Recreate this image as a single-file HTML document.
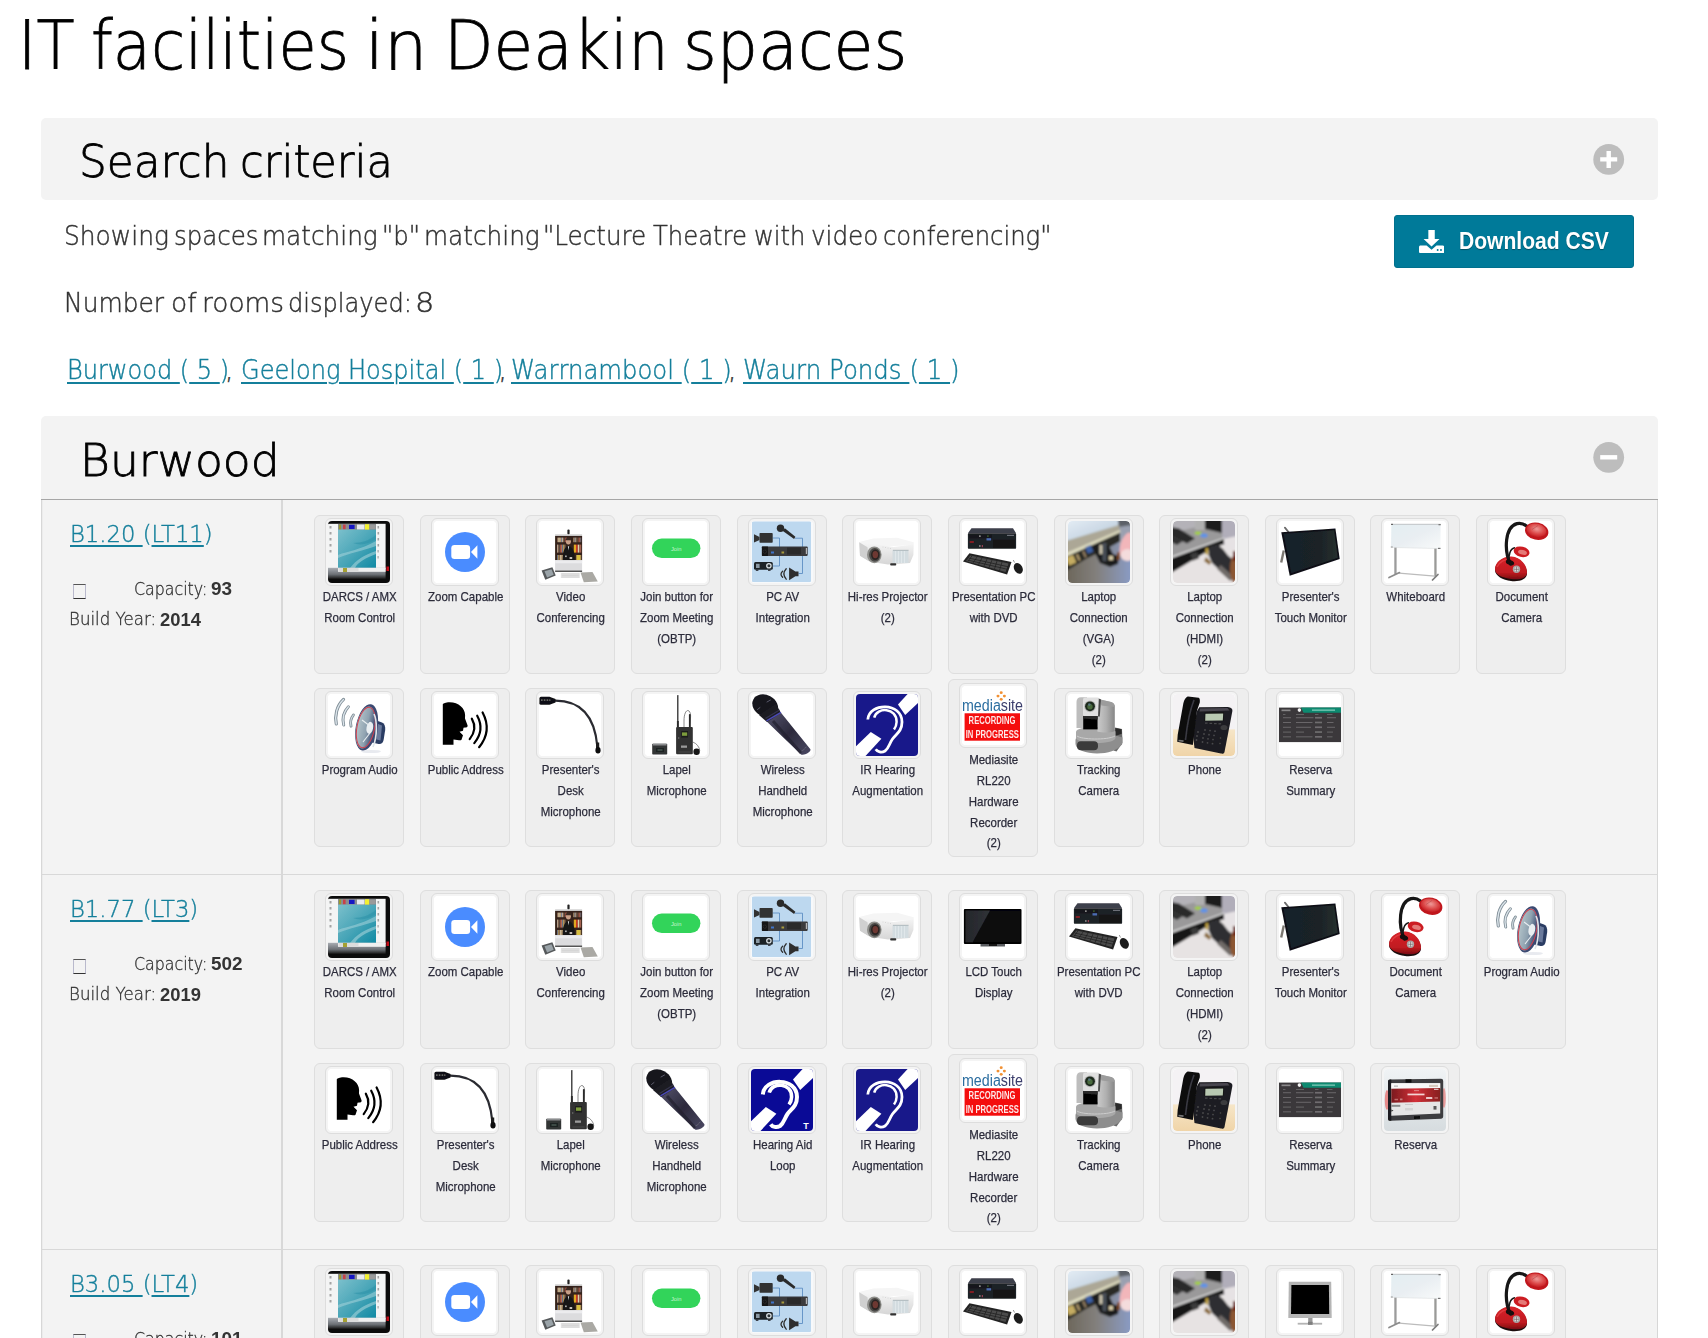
<!DOCTYPE html>
<html lang="en">
<head>
<meta charset="utf-8">
<title>IT facilities in Deakin spaces</title>
<style>
html,body{margin:0;padding:0;background:#fff}
body{width:1708px;height:1338px;overflow:hidden;font-family:"Liberation Sans",sans-serif;color:#333}
#wrap{position:relative;width:1708px;height:1338px;overflow:hidden;background:#fff}
.lt{font-family:"DejaVu Sans Light","DejaVu Sans","Liberation Sans",sans-serif;font-weight:200;
  white-space:nowrap;transform-origin:0 0;margin:0}
h1,h2,p{margin:0;font-weight:200}
a{color:#147f9b}
#title{position:absolute;color:#000;-webkit-text-stroke-color:#000}
.panel{position:absolute;left:41px;width:1617px;background:#f3f3f3;border-radius:5px}
#search{top:118px;height:82px}
#burwood{top:416px;height:940px;border-radius:5px 5px 0 0}
.panel h2{position:absolute;color:#000;-webkit-text-stroke-color:#000}
.tog{position:absolute;left:1552px;top:25px}
#info{position:absolute;left:0;top:200px;width:1708px;height:216px}
#info p{position:absolute;color:#333;-webkit-text-stroke-color:#333}
#p-links a{color:#147f9b;text-decoration:underline;text-decoration-thickness:1.6px;text-underline-offset:3px;-webkit-text-stroke-color:#147f9b}
.btn{position:absolute;left:1394px;top:15px;width:240px;height:53px;box-sizing:border-box;background:#007a99;
  border:1px solid #00708d;border-radius:3px;color:#fff;text-decoration:none;font-weight:bold;font-size:24px}
.btn svg{position:absolute;left:24px;top:13.6px;width:25.3px;height:23.4px}
#btn-t{position:absolute;left:63.5px;top:11.3px;line-height:28px;white-space:nowrap;transform-origin:0 0;transform:scaleX(.878);
  text-shadow:0 1px 1px rgba(0,0,0,.35)}
#rooms{position:absolute;left:0;top:83px;width:1617px;height:860px;border-top:1px solid #a6a6a6}
.room{position:absolute;left:0;width:1617px;height:375px;box-sizing:border-box;border-bottom:1px solid #d8d8d8;
  border-left:1px solid #d7d7d7;border-right:1px solid #d7d7d7;box-shadow:inset 1px 0 0 #ececec}
.meta{position:absolute;left:0;top:0;width:241px;height:374px;border-right:2px solid #d8d8d8;box-sizing:border-box}
.rname{position:absolute;display:block;color:#147f9b;-webkit-text-stroke-color:#147f9b;
  text-decoration:underline;text-decoration-thickness:2px;text-underline-offset:3px}
.tofu{position:absolute;left:31px;top:84px;width:11px;height:13px;border:1px solid #b9b9cc;border-top-color:#555;border-bottom-color:#333}
.capl,.yrl{position:absolute;color:#333;-webkit-text-stroke-color:#333}
.capv,.yrv{position:absolute;color:#333;font-weight:bold;white-space:nowrap;transform-origin:0 0;font-family:"Liberation Sans",sans-serif}
.tiles{position:absolute;left:0;top:0}
.tile{position:absolute;width:90px;box-sizing:border-box;background:#eee;border:1px solid #dedede;border-radius:6px}
.thumb{position:absolute;left:10px;top:2px;width:68px;height:68px;box-sizing:border-box;border:1px solid #ddd;
  border-radius:6px;background:#f4f4f4}
.ic{position:absolute;left:2px;top:2px;border-radius:4px;display:block;background:#fff}
.lab{position:absolute;left:-1px;top:70.8px;width:102.76px;transform:scaleX(.87);transform-origin:0 0;
  text-align:center;font-size:13.2px;line-height:20.9px;color:#2b2b3a;white-space:nowrap;-webkit-text-stroke:.25px #2b2b3a}
.tile.t5 .thumb{top:3px;height:65px}
.tile.t5 .ic{height:59px}
.tile.t5 .lab{top:69.8px}
.np{display:inline-block}
.w{position:absolute;top:0;white-space:nowrap;transform-origin:0 0;display:block}
.cm{color:#333;-webkit-text-stroke-color:#333}
#title{left:0;top:3.7px;font-size:67.8px;line-height:84px;-webkit-text-stroke-width:0.8px}
#h-search{left:0;top:15.78px;font-size:45px;line-height:56px;-webkit-text-stroke-width:0.8px}
#h-bur{left:0;top:17.2px;font-size:45px;line-height:56px;-webkit-text-stroke-width:0.8px}
#p-show{left:0;top:20px;font-size:26.47px;line-height:32px;-webkit-text-stroke-width:0.45px}
#p-num{left:0;top:87px;font-size:26.47px;line-height:32px;-webkit-text-stroke-width:0.45px}
#p-links{left:0;top:154px;font-size:26.47px;line-height:32px;-webkit-text-stroke-width:0.45px}
.rname{left:28.26px;top:18.48px;font-size:23.585px;line-height:32px;transform:scaleX(0.963);-webkit-text-stroke-width:0.4px}
.capl{left:92.28px;top:77.11px;font-size:16.779px;line-height:24px;transform:scaleX(0.944);-webkit-text-stroke-width:0.32px}
.capv{left:169.16px;top:76.87px;font-size:18.895px;line-height:24px;transform:scaleX(1.002);-webkit-text-stroke-width:0px}
.yrl{left:27.28px;top:107.15px;font-size:16.779px;line-height:24px;transform:scaleX(0.993);-webkit-text-stroke-width:0.32px}
.yrv{left:117.76px;top:108.11px;font-size:18.895px;line-height:24px;transform:scaleX(0.975);-webkit-text-stroke-width:0px}

</style>
</head>
<body>
<div id="wrap">
<svg width="0" height="0" style="position:absolute" aria-hidden="true"><defs>
<linearGradient id="g-teal" x1="0" y1="0" x2="1" y2="1"><stop offset="0" stop-color="#7cc0cc"/><stop offset=".5" stop-color="#4aa6b8"/><stop offset="1" stop-color="#0f8aa4"/></linearGradient>
<linearGradient id="g-dbar" x1="0" y1="0" x2="0" y2="1"><stop offset="0" stop-color="#a9adb3"/><stop offset=".6" stop-color="#6c7075"/><stop offset="1" stop-color="#1a1a1a"/></linearGradient>
<linearGradient id="g-sky" x1="0" y1="0" x2="1" y2="1"><stop offset="0" stop-color="#e6eef6"/><stop offset="1" stop-color="#b4c6d6"/></linearGradient>
<linearGradient id="g-table" x1="0" y1="0" x2="1" y2="0"><stop offset="0" stop-color="#6c665a"/><stop offset=".45" stop-color="#827f7c"/><stop offset="1" stop-color="#8a9cc6"/></linearGradient>
<linearGradient id="g-touch" x1="0" y1="0" x2="1" y2="0"><stop offset="0" stop-color="#18202c"/><stop offset=".6" stop-color="#1a2026"/><stop offset="1" stop-color="#26302e"/></linearGradient>
<linearGradient id="g-wb" x1="0" y1="0" x2="1" y2="1"><stop offset="0" stop-color="#e3eef2"/><stop offset=".5" stop-color="#e9eef2"/><stop offset="1" stop-color="#f8fafa"/></linearGradient>
<linearGradient id="g-red" x1="0" y1="0" x2="0" y2="1"><stop offset="0" stop-color="#d8242a"/><stop offset=".7" stop-color="#c01a20"/><stop offset="1" stop-color="#7a0c10"/></linearGradient>
<radialGradient id="g-redhead" cx=".5" cy=".4" r=".6"><stop offset="0" stop-color="#ee9a98"/><stop offset=".6" stop-color="#dc4a4a"/><stop offset="1" stop-color="#c41c22"/></radialGradient>
<linearGradient id="g-cone" x1="0" y1="0" x2="1" y2="0"><stop offset="0" stop-color="#b4c4ca"/><stop offset=".55" stop-color="#8fa2b0"/><stop offset="1" stop-color="#3a4a72"/></linearGradient>
<linearGradient id="g-wave" x1="0" y1="0" x2="1" y2="0"><stop offset="0" stop-color="#8c9aa2"/><stop offset=".5" stop-color="#dfe8ee"/><stop offset="1" stop-color="#7e8c94"/></linearGradient>
<linearGradient id="g-mic" x1="0" y1="0" x2="1" y2="1"><stop offset="0" stop-color="#54526c"/><stop offset=".5" stop-color="#2c2a3c"/><stop offset="1" stop-color="#4a4862"/></linearGradient>
<linearGradient id="g-proj" x1="0" y1="0" x2="0" y2="1"><stop offset="0" stop-color="#f6f6f6"/><stop offset="1" stop-color="#d6d6d6"/></linearGradient>
<linearGradient id="g-ptz" x1="0" y1="0" x2="1" y2="0"><stop offset="0" stop-color="#cacaca"/><stop offset=".5" stop-color="#b0b0b0"/><stop offset="1" stop-color="#868686"/></linearGradient>
<linearGradient id="g-resred" x1="0" y1="0" x2="1" y2="0"><stop offset="0" stop-color="#7a1a1e"/><stop offset=".5" stop-color="#d23038"/><stop offset="1" stop-color="#86201f"/></linearGradient>
<linearGradient id="g-resbg" x1="0" y1="0" x2="0" y2="1"><stop offset="0" stop-color="#f0f3f5"/><stop offset="1" stop-color="#d6dcdf"/></linearGradient>
<linearGradient id="g-tv" x1="0" y1="0" x2="1" y2="0"><stop offset="0" stop-color="#25272b"/><stop offset="1" stop-color="#303237"/></linearGradient>
<linearGradient id="g-desk" x1="0" y1="0" x2="0" y2="1"><stop offset="0" stop-color="#f6e6c8"/><stop offset="1" stop-color="#efd2a4"/></linearGradient>
<filter id="f-b1" x="-5%" y="-5%" width="110%" height="110%"><feGaussianBlur stdDeviation=".6"/></filter>
<filter id="f-b2" x="-5%" y="-5%" width="110%" height="110%"><feGaussianBlur stdDeviation=".9"/></filter>
<filter id="f-b0" x="-5%" y="-5%" width="110%" height="110%"><feGaussianBlur stdDeviation=".3"/></filter>
<clipPath id="c62"><rect width="62" height="62" rx="4"/></clipPath>
</defs></svg>
<h1 class="lt" id="title"><span class="w" style="left:17.594px;transform:scaleX(0.92)">IT</span> <span class="w" style="left:91.142px;transform:scaleX(0.916)">facilities</span> <span class="w" style="left:365.118px;transform:scaleX(1.011)">in</span> <span class="w" style="left:444.14px;transform:scaleX(0.95)">Deakin</span> <span class="w" style="left:683.367px;transform:scaleX(0.958)">spaces</span></h1>

<div class="panel" id="search">
  <h2 class="lt" id="h-search"><span class="w" style="left:37.876px;transform:scaleX(0.973)">Search</span> <span class="w" style="left:198.989px;transform:scaleX(0.958)">criteria</span></h2>
  <svg class="tog" viewBox="0 0 32 32" width="32" height="32"><g transform="translate(-.3 .4)"><circle cx="16" cy="16" r="15.4" fill="#bdbdbd"/><path d="M7.5 13.8h6.3V7.5h4.4v6.3h6.3v4.4h-6.3v6.3h-4.4v-6.3H7.5z" fill="#fff"/></g></svg>
</div>

<div id="info">
  <p class="lt" id="p-show"><span class="w" style="left:64.266px;transform:scaleX(0.941)">Showing</span> <span class="w" style="left:174.118px;transform:scaleX(0.925)">spaces</span> <span class="w" style="left:262.447px;transform:scaleX(0.935)">matching</span> <span class="w" style="left:382.119px;transform:scaleX(0.923)">&quot;b&quot;</span> <span class="w" style="left:423.847px;transform:scaleX(0.935)">matching</span> <span class="w" style="left:543.357px;transform:scaleX(0.93)">&quot;Lecture</span> <span class="w" style="left:653.494px;transform:scaleX(0.917)">Theatre</span> <span class="w" style="left:753.635px;transform:scaleX(0.915)">with</span> <span class="w" style="left:810.64px;transform:scaleX(0.931)">video</span> <span class="w" style="left:883.066px;transform:scaleX(0.919)">conferencing&quot;</span></p>
  <a class="btn" href="#"><svg viewBox="0 0 26 24" width="26" height="24"><path d="M9.6 0h6.6v9.2h4.9L12.9 17 4.7 9.2h4.9z" fill="#fff"/><path d="M1.6 15.8h6.2l5.1 4.6 5.1-4.6h6.4c.9 0 1.6.7 1.6 1.6v4.9c0 .9-.7 1.6-1.6 1.6H1.6C.7 23.9 0 23.2 0 22.3v-4.9c0-.9.7-1.6 1.6-1.6z" fill="#fff"/><circle cx="19.2" cy="20.6" r="1" fill="#007a99"/><circle cx="22.6" cy="20.6" r="1" fill="#007a99"/></svg><span id="btn-t">Download CSV</span></a>
  <p class="lt" id="p-num"><span class="w" style="left:64.464px;transform:scaleX(0.941)">Number</span> <span class="w" style="left:171.45px;transform:scaleX(1.001)">of</span> <span class="w" style="left:201.59px;transform:scaleX(0.997)">rooms</span> <span class="w" style="left:288.374px;transform:scaleX(0.911)">displayed:</span> <span class="w" style="left:415.354px;transform:scaleX(1.147)">8</span></p>
  <p class="lt" id="p-links"><a class="w" href="#" style="left:66.76px;transform:scaleX(0.908)">Burwood <span class="np">(</span> 5 <span class="np">)</span></a> <span class="w cm" style="left:225px">,</span> <a class="w" href="#" style="left:240.704px;transform:scaleX(0.909)">Geelong Hospital <span class="np">(</span> 1 <span class="np">)</span></a> <span class="w cm" style="left:498.4px">,</span> <a class="w" href="#" style="left:511.45px;transform:scaleX(0.919)">Warrnambool <span class="np">(</span> 1 <span class="np">)</span></a> <span class="w cm" style="left:728.1px">,</span> <a class="w" href="#" style="left:743.184px;transform:scaleX(0.924)">Waurn Ponds <span class="np">(</span> 1 <span class="np">)</span></a></p>
</div>

<div class="panel" id="burwood">
  <h2 class="lt" id="h-bur"><span class="w" style="left:38.577px;transform:scaleX(1.014)">Burwood</span></h2>
  <svg class="tog" viewBox="0 0 32 32" width="32" height="32"><g transform="translate(-.3 .3)"><circle cx="16" cy="16" r="15.4" fill="#bdbdbd"/><path d="M7.500 13.800h17v4.400h-17z" fill="#fff"/></g></svg>
  <div id="rooms">
<div class="room" style="top:0px">
<div class="meta"><a class="rname lt" href="#">B1.20 <span class="np">(</span>LT11<span class="np">)</span></a><span class="tofu"></span><span class="capl lt">Capacity:</span><b class="capv">93</b><span class="yrl lt">Build Year:</span><b class="yrv">2014</b></div>
<div class="tiles">
<div class="tile" style="left:272px;top:15px;height:159px"><div class="thumb"><svg class="ic" viewBox="0 0 62 62" width="62" height="62" preserveAspectRatio="none"><rect width="62" height="62" fill="#0b0b0b"/><g filter="url(#f-b0)"><rect x="0" y="2.8" width="57.6" height="45" fill="#f3f4f4"/><rect x="10" y="3" width="38" height="6" fill="#8b8d8f"/><rect x="10" y="8.6" width="38" height="38.6" fill="url(#g-teal)"/><path d="M10 34c10-4 22-5 38-14v5C34 30 22 32 10 37z" fill="#a6d3da" opacity=".55"/><path d="M22 47c6-8 14-13 26-17v3C38 37 30 41 27 47z" fill="#b9dde2" opacity=".5"/><path d="M25 22c8 3 16 1 23-4v-4c-6 5-14 8-23 8z" fill="#2f93a8" opacity=".6"/><rect x="11" y="3.6" width="2" height="4.6" fill="#9a9a2a"/><rect x="15" y="3.6" width="2.6" height="4.6" fill="#c8404a"/><rect x="21" y="3.8" width="5.6" height="4.2" fill="#1818c4"/><rect x="29" y="3.6" width="7.5" height="4.8" fill="#e8eaf0"/><rect x="37" y="3.2" width="4.2" height="5.4" fill="#f2f030"/><rect x="42" y="4" width="5.5" height="4" fill="#9a9a9a"/><g fill="#a4a4a4"><rect x="1.5" y="5" width="2" height="2.5"/><rect x="1.5" y="11" width="2" height="2.5"/><rect x="1.5" y="17" width="2" height="2.5"/><rect x="1.5" y="23" width="2" height="2.5"/><rect x="1.5" y="29" width="2" height="2.5"/><rect x="49.5" y="5" width="1.6" height="2.5"/><rect x="49.5" y="11" width="1.6" height="2.5"/><rect x="49.5" y="17" width="1.6" height="2.5"/><rect x="49.5" y="23" width="1.6" height="2.5"/><rect x="49.5" y="29" width="1.2" height="2.5"/><rect x="49.5" y="35" width="1.2" height="2.5"/></g><rect x="0" y="46.8" width="57.6" height="11" fill="url(#g-dbar)"/><rect x="10" y="46.8" width="47.6" height="4" fill="#f0f0f0"/><rect x="10.5" y="47" width="20" height="3.8" fill="#dcdcdc"/><rect x="15" y="47" width="4" height="4" fill="#a4a030"/><rect x="58.4" y="45.5" width="2.6" height="4.5" fill="#c00a14"/></g></svg></div><div class="lab" style="left:-0.02px">DARCS / AMX<br>Room Control</div></div>
<div class="tile" style="left:378px;top:15px;height:159px"><div class="thumb"><svg class="ic" viewBox="0 0 62 62" width="62" height="62" preserveAspectRatio="none"><rect width="62" height="62" fill="#fff"/><circle cx="31" cy="31" r="20" fill="#4a8cff"/><rect x="17.3" y="24" width="18.8" height="14" rx="3.2" fill="#fff"/><path d="M37 31l6.4-6.8v13.6z" fill="#fff"/></svg></div><div class="lab" style="left:-0.38px">Zoom Capable</div></div>
<div class="tile" style="left:483px;top:15px;height:159px"><div class="thumb"><svg class="ic" viewBox="0 0 62 62" width="62" height="62" preserveAspectRatio="none"><rect width="62" height="62" fill="#fff"/><g filter="url(#f-b1)" transform="translate(.8 0)"><rect x="27.6" y="8.6" width="2.2" height="5" rx="1" fill="#222"/><rect x="15.3" y="13.4" width="27" height="2" fill="#c9c9c9"/><rect x="15.3" y="15" width="27" height="24.3" fill="#34221a"/><rect x="17.2" y="16.6" width="1.2" height="4.6" fill="#8a6a50"/><rect x="18.4" y="16.6" width="0.9" height="4.6" fill="#d8c8a8"/><rect x="19.3" y="16.6" width="0.9" height="4.6" fill="#d0b890"/><rect x="20.2" y="16.6" width="1.2" height="4.6" fill="#b89a70"/><rect x="21.4" y="16.6" width="0.9" height="4.6" fill="#8890a8"/><rect x="22.3" y="16.6" width="0.9" height="4.6" fill="#c8b8a0"/><rect x="23.2" y="16.6" width="1.2" height="4.6" fill="#7a5a48"/><rect x="24.4" y="16.6" width="0.9" height="4.6" fill="#5a4a40"/><rect x="25.3" y="16.6" width="0.9" height="4.6" fill="#a05040"/><rect x="26.2" y="16.6" width="0.8" height="4.6" fill="#b06a58"/><rect x="33.5" y="16.6" width="1.2" height="4.6" fill="#b89a70"/><rect x="34.7" y="16.6" width="0.9" height="4.6" fill="#8890a8"/><rect x="35.6" y="16.6" width="0.9" height="4.6" fill="#c8b8a0"/><rect x="36.5" y="16.6" width="1.2" height="4.6" fill="#7a5a48"/><rect x="37.7" y="16.6" width="0.9" height="4.6" fill="#5a4a40"/><rect x="38.6" y="16.6" width="0.9" height="4.6" fill="#a05040"/><rect x="39.5" y="16.6" width="1.2" height="4.6" fill="#b06a58"/><rect x="40.7" y="16.6" width="0.7" height="4.6" fill="#6a7890"/><rect x="17.2" y="23.6" width="0.9" height="8" fill="#c8b8a0"/><rect x="18.1" y="23.6" width="1.2" height="8" fill="#7a5a48"/><rect x="19.3" y="23.6" width="0.9" height="8" fill="#5a4a40"/><rect x="20.2" y="23.6" width="0.9" height="8" fill="#a05040"/><rect x="21.1" y="23.6" width="1.2" height="8" fill="#b06a58"/><rect x="22.3" y="23.6" width="0.9" height="8" fill="#6a7890"/><rect x="23.2" y="23.6" width="0.9" height="8" fill="#c0a860"/><rect x="24.1" y="23.6" width="1.2" height="8" fill="#8a6a50"/><rect x="25.3" y="23.6" width="0.2" height="8" fill="#d8c8a8"/><rect x="39.4" y="23.6" width="0.9" height="8" fill="#a05040"/><rect x="40.3" y="23.6" width="1.1" height="8" fill="#b06a58"/><rect x="17.2" y="34" width="0.9" height="5.2" fill="#6a7890"/><rect x="18.1" y="34" width="0.9" height="5.2" fill="#c0a860"/><rect x="19.0" y="34" width="1.2" height="5.2" fill="#8a6a50"/><rect x="20.2" y="34" width="0.9" height="5.2" fill="#d8c8a8"/><rect x="21.1" y="34" width="0.9" height="5.2" fill="#d0b890"/><rect x="22.0" y="34" width="1.2" height="5.2" fill="#b89a70"/><rect x="23.2" y="34" width="0.8" height="5.2" fill="#8890a8"/><rect x="36.5" y="34" width="0.9" height="5.2" fill="#c0a860"/><rect x="37.4" y="34" width="1.2" height="5.2" fill="#8a6a50"/><rect x="38.6" y="34" width="0.9" height="5.2" fill="#d8c8a8"/><rect x="39.5" y="34" width="0.9" height="5.2" fill="#d0b890"/><rect x="40.4" y="34" width="1.0" height="5.2" fill="#b89a70"/><rect x="34" y="23.6" width="2.2" height="8" fill="#e0a820"/><rect x="36.200" y="23.600" width="1.800" height="8" fill="#c83820"/><rect x="38" y="23.600" width="1.400" height="8" fill="#d8d0b0"/><rect x="37" y="34" width="3.500" height="5.200" fill="#d8c040"/><ellipse cx="28.6" cy="20.3" rx="2.5" ry="3.2" fill="#c8a088"/><path d="M26 18.200c.800-2.400 4.400-2.400 5.200 0l-.2 1h-4.800z" fill="#3a2a20"/><path d="M22.800 39.300c0-9 2-13.500 5.800-14.500 4 1 6.400 5.500 6.400 14.500z" fill="#171717"/><path d="M28 25.200l.700 4 .700-4z" fill="#ddd"/><rect x="29.800" y="36" width="2.600" height="2" fill="#c8c0b8"/><rect x="25.300" y="34.500" width="1.600" height="1.600" fill="#bbb"/><rect x="15.3" y="39.3" width="27" height="10.4" fill="#dcdcde"/><rect x="15.3" y="39.3" width="27" height="3" fill="#ececee"/><rect x="15.3" y="49.5" width="27" height="1.5" fill="#555"/><rect x="21" y="52" width="19" height="5" fill="#e3e3e3"/><path d="M22 53h17M22 54.500h17M22 56h17" stroke="#c8c8c8" stroke-width=".5"/><path d="M1.800 49.500l10.800-3.300 3.300 8.400-10.400 4.100z" fill="#55585a"/><path d="M4.700 50.200l7-2 2.200 5.600-6.600 2.600z" fill="#9aa3a8"/><path d="M40.700 51.500l12-.4 5.300 9.500-14 .6z" fill="#aaa9a4"/></g></svg></div><div class="lab" style="left:0.26px">Video<br>Conferencing</div></div>
<div class="tile" style="left:589px;top:15px;height:159px"><div class="thumb"><svg class="ic" viewBox="0 0 62 62" width="62" height="62" preserveAspectRatio="none"><rect width="62" height="62" fill="#fff"/><rect x="7" y="17.6" width="48.4" height="19.4" rx="9.7" fill="#32d45a"/><text x="31.200" y="29.500" font-family="Liberation Sans,sans-serif" font-size="5.8" text-anchor="middle" fill="#c4f4d0">Join</text></svg></div><div class="lab" style="left:-0.1px">Join button for<br>Zoom Meeting<br>(OBTP)</div></div>
<div class="tile" style="left:695px;top:15px;height:159px"><div class="thumb"><svg class="ic" viewBox="0 0 62 62" width="62" height="62" preserveAspectRatio="none"><rect width="62" height="62" fill="#f7f9fb"/><rect x="1" y=".5" width="59" height="60.500" rx="1" fill="#bdd8ef"/><g filter="url(#f-b0)"><path d="M21.700 17h6.800v28h-6.700M44 17.200h7.500v35.300h-4" fill="none" stroke="#5e8fc4" stroke-width=".9"/><rect x="8.5" y="12" width="13.200" height="9.700" rx=".8" fill="#303030"/><path d="M3 13.300l5.500 2.700v3l-5.500 2.600z" fill="#303030"/><circle cx="29.500" cy="7.300" r="3.700" fill="#2c2c2c"/><path d="M31.500 9.800l2.400-2.600 10.500 8.600-1.300 2.200z" fill="#2c2c2c"/><rect x="10.900" y="25.500" width="45.800" height="9.400" rx=".8" fill="#3a3a3e"/><rect x="10.900" y="25.500" width="6" height="9.400" fill="#121214"/><rect x="36" y="26.500" width="14" height="7" fill="#2a2a2c"/><rect x="54.800" y="27" width="1.200" height="6" fill="#b8b8b8"/><rect x="20" y="30.500" width="3" height="2" fill="#3f74c8"/><rect x="30.500" y="30.500" width="2.600" height="2" fill="#a89a3c"/><circle cx="13.800" cy="30.600" r="1.700" fill="none" stroke="#444" stroke-width=".5"/><rect x="3" y="41" width="18.800" height="7.700" rx="1.500" fill="#1e2428"/><rect x="4.800" y="48.500" width="2.600" height="1.300" fill="#1e2428"/><rect x="17" y="48.500" width="2.600" height="1.300" fill="#1e2428"/><circle cx="17.900" cy="44.800" r="2.800" fill="#d9dfe3"/><circle cx="17.900" cy="44.800" r="1.500" fill="#2a3036"/><rect x="5" y="42.800" width="3.600" height="4.200" fill="#8a99a4"/><path d="M38.100 46.600v12.600l6.300-4h3.100v-4.600h-3.100z" fill="#2e2e2e"/><path d="M35.200 47.800q-4.600 5 0 10.400M31.600 50.200q-3.200 3 0 6" fill="none" stroke="#2e2e2e" stroke-width="1.300" stroke-linecap="round"/></g></svg></div><div class="lab" style="left:-0.46px">PC AV<br>Integration</div></div>
<div class="tile" style="left:800px;top:15px;height:159px"><div class="thumb"><svg class="ic" viewBox="0 0 62 62" width="62" height="62" preserveAspectRatio="none"><rect width="62" height="62" fill="#fff"/><g filter="url(#f-b1)"><path d="M3.200 21l14-3.500 24-.8 16.500 4.500v3l-54 2z" fill="#f5f5f5"/><path d="M3.200 21.200l.8 13.500 10 6 18 2.800 22-1.500 3.400-8 .3-10.400-20 2.400z" fill="url(#g-proj)"/><path d="M3.200 21.200l.8 13.500 9 5.500-1.500-14z" fill="#d0d0d0"/><rect x="36.500" y="29" width="16" height="13" fill="#d3dce0"/><path d="M37 29.300h15.500" stroke="#8a949a" stroke-width=".5"/><g stroke="#e9eef0" stroke-width=".6"><path d="M39.500 30v12M42.500 30v12M45.500 30v12M48.500 30v12"/></g><ellipse cx="18.300" cy="33.800" rx="7.300" ry="8.400" fill="#8e8e8a"/><ellipse cx="18.800" cy="33.800" rx="5.700" ry="6.900" fill="#4a4846"/><ellipse cx="19.200" cy="33.700" rx="4.200" ry="5.200" fill="#2a2422"/><ellipse cx="19.300" cy="33.600" rx="2.800" ry="3.600" fill="#6e3832"/><rect x="34.200" y="42.200" width="6" height="2.300" rx=".8" fill="#333"/><g fill="#bbb"><circle cx="27" cy="26" r=".4"/><circle cx="29.500" cy="26.500" r=".4"/><circle cx="32" cy="27" r=".4"/><circle cx="34.300" cy="27.500" r=".4"/></g></g></svg></div><div class="lab" style="left:0.18px">Hi-res Projector<br>(2)</div></div>
<div class="tile" style="left:906px;top:15px;height:159px"><div class="thumb"><svg class="ic" viewBox="0 0 62 62" width="62" height="62" preserveAspectRatio="none"><rect width="62" height="62" fill="#fff"/><g filter="url(#f-b0)"><path d="M9.500 7.300h41.500l3.100 5h-48.200z" fill="#3c3f4b"/><rect x="5.900" y="12.300" width="48.200" height="15.400" rx=".6" fill="#1d2025"/><rect x="7" y="13.500" width="23" height="3.600" fill="#15171a"/><rect x="31" y="18.800" width="22" height="8" fill="#121316"/><rect x="24.500" y="17.200" width="4.600" height="2.300" fill="#4c6cb4"/><rect x="7.500" y="20.200" width="4.600" height="1.600" rx=".8" fill="#a01e22"/><rect x="45" y="13.800" width="7" height="1.200" fill="#6c6f78"/><rect x="17" y="14.300" width="1.700" height="1.700" fill="#8a8a8a"/><rect x="25.300" y="14.500" width="1.200" height="1.200" fill="#5a8a3a"/><rect x="17" y="24" width="1.600" height="2" fill="#777"/><rect x="19.800" y="24" width="1" height="2.200" fill="#b04a5a"/><path d="M1 40.500l6.400-8.300 42.100 8.700-4.400 12.700z" fill="#242424"/><path d="M4 40l4.500-5.600 38 8-3 8.500z" fill="#4c4c4c"/><g stroke="#1c1c1c" stroke-width=".7"><path d="M6.500 37l39.500 8.700M5.300 39l39.600 9.200M10 34.800l-4 5.500M15 36l-4 6M20 37l-3.500 6.500M25 38l-3 7M30 39l-3 7.600M35 40l-2.500 8M40 41l-2.500 8.600"/></g><ellipse cx="56.300" cy="47.400" rx="4.200" ry="5.700" transform="rotate(-28 56.300 47.400)" fill="#1c1c1c"/><path d="M52.500 41.500l-1.200-2.500" stroke="#333" stroke-width=".5"/></g></svg></div><div class="lab" style="left:-0.18px">Presentation PC<br>with DVD</div></div>
<div class="tile" style="left:1012px;top:15px;height:159px"><div class="thumb"><svg class="ic" viewBox="0 0 62 62" width="62" height="62" preserveAspectRatio="none"><g clip-path="url(#c62)"><g filter="url(#f-b2)"><rect x="-2" y="-2" width="66" height="66" fill="url(#g-table)"/><path d="M-2 -2h52l2 8L-2 21z" fill="url(#g-sky)"/><path d="M50 -2h14v24l-8 8-6-8z" fill="#9aa0b0"/><path d="M50 -2h14v6l-13 2z" fill="#5c6068"/><path d="M-2 20L51 4l1 6L-2 33z" fill="#aca796"/><path d="M-2 32L52 9l.5 2.500L-2 36z" fill="#dedcc0"/><path d="M-2 36L52 11.500v9L36 29 18 38-2 50z" fill="#2c2c26"/><rect x="18" y="25" width="6" height="7" transform="rotate(-24 21 28)" fill="#3b5fa4"/><rect x="-1" y="35" width="8" height="8.500" transform="rotate(-24 3 39)" fill="#c4ac62"/><rect x="9" y="33" width="2" height="7" transform="rotate(-24 10 36)" fill="#b8a070"/><rect x="15.500" y="30" width="1.600" height="7" transform="rotate(-24 16 33)" fill="#a89070"/><path d="M24 26l9-5 8 4 4 8 6 2-1 8-8 3-10-4z" fill="#1c1c1e"/><rect x="31.500" y="24" width="3" height="9" fill="#d8d0b8"/><rect x="34.500" y="22" width="4" height="18" fill="#4a5058"/><rect x="41" y="35" width="4" height="4" fill="#d8cca8"/><rect x="49" y="31" width="3" height="8" fill="#7a4828"/><ellipse cx="58.500" cy="24" rx="6" ry="13" transform="rotate(18 58.500 24)" fill="#f2b6ba"/><ellipse cx="59.500" cy="34" rx="7" ry="6" fill="#f4dcdc"/></g></g></svg></div><div class="lab" style="left:-0.54px">Laptop<br>Connection<br>(VGA)<br>(2)</div></div>
<div class="tile" style="left:1117px;top:15px;height:159px"><div class="thumb"><svg class="ic" viewBox="0 0 62 62" width="62" height="62" preserveAspectRatio="none"><g clip-path="url(#c62)"><g filter="url(#f-b2)"><rect x="-2" y="-2" width="66" height="66" fill="#e7e3e3"/><path d="M-2 -2h66v20L40 27 -2 50z" fill="#9a999a"/><path d="M-2 -2h26v8L-2 12z" fill="#b4b2b8"/><path d="M48 -2h16v20l-14 6z" fill="#b1aeba"/><path d="M50 18l14-3v12l-10 3z" fill="#e6e2e4"/><rect x="22" y="-2" width="9.500" height="11" fill="#b0b0b0"/><path d="M32 -2h17v14l-17-4z" fill="#1e1e1c"/><path d="M-2 6l8 1.500 16 10-8 5-16-8z" fill="#2c2c2c"/><path d="M-2 14l12 6-6 4-6-3z" fill="#333"/><ellipse cx="25" cy="12" rx="3.400" ry="1.600" fill="#a4d634"/><ellipse cx="31" cy="14.400" rx="3.600" ry="2" fill="#5b92ea"/><path d="M-2 35.500L51 16.500v1.800L-2 37.500z" fill="#dcdcdc"/><path d="M-2 37.500L51 18v5L40 27 -2 52z" fill="#171717"/><rect x="18" y="32" width="7" height="7" transform="rotate(-22 21 35)" fill="#3a3a3a"/><rect x="32.500" y="27" width="2.600" height="6.500" fill="#c4a43c"/><path d="M36 25.500l8-2.500 6 5 5 6.500 6 5 2 9-7 6-8-4-9-8.500-3.500-8z" fill="#2e2e30"/><path d="M46 46l13 12" stroke="#6f6b68" stroke-width="5.500"/><path d="M33 36l5 5-1.500 3-5.500-4z" fill="#8a6a38"/><ellipse cx="62" cy="48" rx="5" ry="14" fill="#8c5630"/><rect x="60" y="30" width="3" height="10" fill="#6a1410"/></g></g></svg></div><div class="lab" style="left:0.1px">Laptop<br>Connection<br>(HDMI)<br>(2)</div></div>
<div class="tile" style="left:1223px;top:15px;height:159px"><div class="thumb"><svg class="ic" viewBox="0 0 62 62" width="62" height="62" preserveAspectRatio="none"><rect width="62" height="62" fill="#fff"/><g filter="url(#f-b0)"><path d="M5.900 6.600l3.600 4.400" stroke="#6a6a6a" stroke-width="1.800" stroke-linecap="round"/><path d="M4.800 29.500L2.200 41.500" stroke="#7c7872" stroke-width="2.400"/><path d="M2.300 11.200l54.100-3.800 4.300 30.700-50 16.700z" fill="#0c0e14"/><path d="M4.500 12.800l50.600-3.500 3.700 27.500-46.500 15.500z" fill="url(#g-touch)"/></g></svg></div><div class="lab" style="left:-0.26px">Presenter&#39;s<br>Touch Monitor</div></div>
<div class="tile" style="left:1328px;top:15px;height:159px"><div class="thumb"><svg class="ic" viewBox="0 0 62 62" width="62" height="62" preserveAspectRatio="none"><rect width="62" height="62" fill="#fff"/><g filter="url(#f-b0)"><rect x="10.300" y="26" width="2.300" height="27" fill="#9c9c9c"/><rect x="50.300" y="27" width="2.300" height="28.500" fill="#9a9a98"/><path d="M15 52.200l36 3" stroke="#bcbcbc" stroke-width="1.200"/><path d="M5 56.600l10.500-5" stroke="#8c8c8c" stroke-width="1.700" stroke-linecap="round"/><path d="M48.500 59l5.500-5.500" stroke="#7c7c7c" stroke-width="1.700" stroke-linecap="round"/><path d="M7.400 3.200h49.200l-.2 24.200-49.400-1.200z" fill="url(#g-wb)"/><path d="M7.400 3.300h49.200" stroke="#b4b8ba" stroke-width=".8"/><path d="M7 26.400l49.400 1.200" stroke="#d8dcde" stroke-width=".6"/><rect x="7" y="2.800" width="2" height="1.200" fill="#666"/><rect x="54.500" y="3" width="2.200" height="1.300" fill="#777"/><rect x="54" y="26.800" width="2.500" height="1.200" fill="#777"/><rect x="6.800" y="25.500" width="2" height="1" fill="#999"/></g></svg></div><div class="lab" style="left:0.38px">Whiteboard</div></div>
<div class="tile" style="left:1434px;top:15px;height:159px"><div class="thumb"><svg class="ic" viewBox="0 0 62 62" width="62" height="62" preserveAspectRatio="none"><rect width="62" height="62" fill="#fff"/><g filter="url(#f-b0)"><path d="M5 49c0-7 8-13.500 16.500-13 9 .5 15.500 9 15.500 16.500 0 6-8 8.500-16 7.500S5 55 5 49z" fill="#1a0a0a"/><path d="M5 48c0-7 8-13 16.500-12.500 9 .5 15.500 8.500 15.500 16 0 6-8 7.500-16 6.500S5 54 5 48z" fill="url(#g-red)"/><path d="M7 46c2-5 8-8 13-8" stroke="#e8484c" stroke-width="1.200" fill="none" opacity=".7"/><path d="M20.500 43C14 30 14.500 6 27 2.600c4-1 7 .4 9.500 2.400" fill="none" stroke="#141414" stroke-width="3.200" stroke-linecap="round"/><path d="M19 40c-.5-6 1-12.500 6-13.200" fill="none" stroke="#141414" stroke-width="1.500"/><ellipse cx="20" cy="41.500" rx="4.300" ry="2.500" transform="rotate(20 20 41.500)" fill="#120808"/><ellipse cx="46.700" cy="10.200" rx="11.800" ry="8.600" transform="rotate(12 46.700 10.200)" fill="#c0181e"/><ellipse cx="46.500" cy="9.300" rx="10" ry="6.600" transform="rotate(12 46.500 9.300)" fill="url(#g-redhead)"/><path d="M42 8.500l6-4" stroke="#a04040" stroke-width=".4"/><ellipse cx="31.600" cy="30.800" rx="8" ry="5.200" transform="rotate(14 31.600 30.800)" fill="#cc1c22"/><ellipse cx="32.500" cy="31.300" rx="4.500" ry="2.300" transform="rotate(14 32.500 31.300)" fill="#e47a78"/><circle cx="26.500" cy="48.300" r="3.700" fill="#a9a4a4"/><circle cx="26.500" cy="48.300" r="2.200" fill="#d8d4d4"/><path d="M24 48.300h5M26.500 45.800v5" stroke="#6a5a5a" stroke-width=".6"/></g></svg></div><div class="lab" style="left:0.02px">Document<br>Camera</div></div>
<div class="tile" style="left:272px;top:188px;height:159px"><div class="thumb"><svg class="ic" viewBox="0 0 62 62" width="62" height="62" preserveAspectRatio="none"><rect width="62" height="62" fill="#fff"/><g filter="url(#f-b0)"><path d="M47 26l7 2.500c2.500 1 3.500 4 3.200 7.500l-1.600 10c-.6 3-2.400 4.400-5 4l-6.600-1.500z" fill="#2c3c64"/><path d="M50 30l4 1.500-1.500 15-4-1z" fill="#6a7a9c"/><ellipse cx="38.600" cy="33.400" rx="10.800" ry="23.600" transform="rotate(11 38.600 33.400)" fill="#3b4a72"/><ellipse cx="37.600" cy="33.500" rx="9.200" ry="21.400" transform="rotate(11 37.600 33.500)" fill="url(#g-cone)"/><ellipse cx="37.800" cy="33.500" rx="8.800" ry="20.500" transform="rotate(11 37.800 33.500)" fill="none" stroke="#d2404e" stroke-width="1"/><path d="M34 26l8 6M35 48l7-9" stroke="#e8eef0" stroke-width="1.100"/><ellipse cx="41.800" cy="33.800" rx="3.300" ry="6" transform="rotate(11 41.800 33.800)" fill="#e9eef1"/><path d="M46 20c3 6 3.600 22-1 33" stroke="#dfe5ea" stroke-width="1.600" fill="none"/><ellipse cx="43" cy="57.500" rx="10" ry="1.600" fill="#d8dce4" opacity=".6"/><path d="M15.500 5.400C8.500 12 6.600 22 8.300 30" fill="none" stroke="#7f8d96" stroke-width="3.200" stroke-linecap="round"/><path d="M15.500 5.400C8.500 12 6.600 22 8.300 30" fill="none" stroke="#dbe4ea" stroke-width="1.400" stroke-linecap="round"/><path d="M20.400 12.800C15.500 18 14.200 25 15.700 31" fill="none" stroke="#7f8d96" stroke-width="3" stroke-linecap="round"/><path d="M20.400 12.800C15.500 18 14.200 25 15.700 31" fill="none" stroke="#dbe4ea" stroke-width="1.300" stroke-linecap="round"/><path d="M25.400 21C22.800 24.500 22 28.500 23 32.200" fill="none" stroke="#7f8d96" stroke-width="2.900" stroke-linecap="round"/><path d="M25.400 21C22.800 24.500 22 28.500 23 32.200" fill="none" stroke="#cfd9df" stroke-width="1.200" stroke-linecap="round"/></g></svg></div><div class="lab" style="left:-0.02px">Program Audio</div></div>
<div class="tile" style="left:378px;top:188px;height:159px"><div class="thumb"><svg class="ic" viewBox="0 0 62 62" width="62" height="62" preserveAspectRatio="none"><rect width="62" height="62" fill="#fff"/><path d="M8.800 10.200Q9 9.200 14 8.300C24 7.500 31 14 31.100 21L31 24.500l2.600 7Q33.800 33.500 31 33.600l-1.500.1-.5 3.100-3.500 1 3.500 3.400-1.500 4.600Q27 46.500 25 46.300l-5.500-.8v5.300H8.800z" fill="#000"/><g fill="none" stroke="#000" stroke-width="2.200" stroke-linecap="round"><path d="M37.800 24.600Q43.800 35 35.700 45.100"/><path d="M43.200 21.700Q51 36 40.300 49.100"/><path d="M48.600 18.500Q58.400 37 45.100 53.200"/></g></svg></div><div class="lab" style="left:-0.38px">Public Address</div></div>
<div class="tile" style="left:483px;top:188px;height:159px"><div class="thumb"><svg class="ic" viewBox="0 0 62 62" width="62" height="62" preserveAspectRatio="none"><rect width="62" height="62" fill="#fff"/><g filter="url(#f-b0)"><path d="M16 6.600C36 6.500 55 16 58.300 52" fill="none" stroke="#2a2c30" stroke-width="2.200"/><path d="M.4 4.200Q.4 2.700 2 2.700h8.500l6 2.300v3.400l-6 2.300H2Q.4 10.700.4 9.200z" fill="#101012"/><g fill="#8a8a8a"><rect x="2" y="5.500" width="1.600" height="1.200"/><rect x="4.800" y="5.500" width="1.600" height="1.200"/><rect x="7.600" y="5.500" width="1.600" height="1.200"/><rect x="10.200" y="5.500" width="1.200" height="1.200"/></g><rect x="57" y="48.500" width="3.200" height="6" fill="#1a1a1c"/><ellipse cx="59" cy="56.300" rx="2.600" ry="3.300" fill="#0c0c0e"/></g></svg></div><div class="lab" style="left:0.26px">Presenter&#39;s<br>Desk<br>Microphone</div></div>
<div class="tile" style="left:589px;top:188px;height:159px"><div class="thumb"><svg class="ic" viewBox="0 0 62 62" width="62" height="62" preserveAspectRatio="none"><rect width="62" height="62" fill="#fff"/><g filter="url(#f-b0)"><path d="M32.800 1.600v32" stroke="#2c2c2c" stroke-width="1.300" stroke-linecap="round"/><rect x="31.900" y="27" width="1.900" height="6.500" fill="#2a2a2a"/><path d="M39 33.500V27C39 14 45.500 14 45.600 22l-.6 11.500" fill="none" stroke="#555" stroke-width=".7"/><rect x="43.900" y="20" width="1.800" height="13.500" rx=".8" fill="#2c2c2c"/><rect x="31.100" y="33" width="16.700" height="27.200" rx="1" fill="#303030"/><rect x="36.300" y="37" width="6.600" height="6.500" fill="#1a1a1a"/><rect x="37" y="38.400" width="5.200" height="3.400" fill="#7d9c3e"/><rect x="36" y="51.500" width="6" height="2.300" fill="#9a9a9a"/><circle cx="33.700" cy="44" r=".8" fill="#777"/><path d="M33.500 58h12" stroke="#6a6a6a" stroke-width=".5"/><path d="M47.800 48c4 1.500 6.500 5 7 8.500" fill="none" stroke="#444" stroke-width=".6"/><circle cx="51.600" cy="57.700" r="3.200" fill="#121212"/><rect x="7.200" y="49.700" width="15" height="10.800" rx=".8" fill="#333436"/><rect x="7.800" y="49.700" width="13.800" height="1.800" fill="#8a8c8e"/><rect x="11" y="54" width="8" height="4" fill="#1c2220"/><rect x="12.500" y="55" width="5" height="2" fill="#3c4a44"/></g></svg></div><div class="lab" style="left:-0.1px">Lapel<br>Microphone</div></div>
<div class="tile" style="left:695px;top:188px;height:159px"><div class="thumb"><svg class="ic" viewBox="0 0 62 62" width="62" height="62" preserveAspectRatio="none"><rect width="62" height="62" fill="#fff"/><g filter="url(#f-b1)"><path d="M15.500 27.300L30 18.700l29.400 36.600c.6 1.400-1.500 3.600-4.400 4.600-2.500 1-4.300.8-5 .5z" fill="url(#g-mic)"/><path d="M22 27l28 32" stroke="#23212f" stroke-width="3" opacity=".7"/><ellipse cx="14.200" cy="11.700" rx="13.400" ry="10.700" transform="rotate(28 14.200 11.700)" fill="#16161c"/><path d="M8 21l8 7 14-9-5-9z" fill="#1c1c24"/><path d="M15.500 26.800L30 18.300" stroke="#4b49b6" stroke-width="1.500"/><path d="M14.500 24.500l14-8.500" stroke="#35344a" stroke-width="1.200"/><path d="M16 8l3.500-2M6.500 15.500l2.500-2" stroke="#5a5a6a" stroke-width="1" stroke-linecap="round"/><path d="M50.500 57l3-1.800M53.500 54.300l2-1.300" stroke="#6a6a78" stroke-width=".8"/></g></svg></div><div class="lab" style="left:-0.46px">Wireless<br>Handheld<br>Microphone</div></div>
<div class="tile" style="left:800px;top:188px;height:159px"><div class="thumb"><svg class="ic" viewBox="0 0 62 62" width="62" height="62" preserveAspectRatio="none"><rect width="62" height="62" fill="#18188a"/><path d="M51.600 0H62v9L49.200 20.900 42 10.600z" fill="#fff"/><path d="M0 52.300L14.800 38.100l10.600 6.600L9.500 62H0z" fill="#fff"/><path d="M11.800 25.500C13 8.500 46 8 46 28c0 9.500-6 12-9.500 17-3.500 5-3.300 9-7.500 12-3.500 2-7.500 1-9.300-1.700" fill="none" stroke="#fff" stroke-width="2.8"/><path d="M18.200 23.600C21 12.500 41 13.500 40.600 28c-.1 3.500-1.100 5.500-2.600 7.500" fill="none" stroke="#fff" stroke-width="2.5"/></svg></div><div class="lab" style="left:0.18px">IR Hearing<br>Augmentation</div></div>
<div class="tile t5" style="left:906px;top:179px;height:178px"><div class="thumb"><svg class="ic" viewBox="0 0 62 62" width="62" height="62" preserveAspectRatio="none"><rect width="62" height="62" fill="#fff"/><g filter="url(#f-b0)"><g fill="#f29030"><circle cx="39.200" cy="7" r="1.500"/><circle cx="36" cy="10.600" r="1.500"/><circle cx="42.400" cy="10.600" r="1.500"/><circle cx="39.200" cy="14" r="1.500"/></g><text x="0" y="25.800" font-family="Liberation Sans,sans-serif" font-size="17.500" textLength="61" lengthAdjust="spacingAndGlyphs"><tspan fill="#2c6ea0">media</tspan><tspan fill="#3a3d6c">site</tspan></text><rect x="2.600" y="28.700" width="55.400" height="28.800" fill="#f40a0a"/><text x="30" y="39.700" font-family="Liberation Sans,sans-serif" font-weight="bold" font-size="11.600" text-anchor="middle" textLength="46.800" lengthAdjust="spacingAndGlyphs" fill="#fde8e8">RECORDING</text><text x="30.300" y="54.500" font-family="Liberation Sans,sans-serif" font-weight="bold" font-size="11.900" text-anchor="middle" textLength="53.300" lengthAdjust="spacingAndGlyphs" fill="#fde8e8">IN PROGRESS</text></g></svg></div><div class="lab" style="left:-0.18px">Mediasite<br>RL220<br>Hardware<br>Recorder<br>(2)</div></div>
<div class="tile" style="left:1012px;top:188px;height:159px"><div class="thumb"><svg class="ic" viewBox="0 0 62 62" width="62" height="62" preserveAspectRatio="none"><rect width="62" height="62" fill="#fff"/><g filter="url(#f-b1)"><path d="M47 33.500l7 1.500.500 14-6 8.500-3-1z" fill="#6c6c6c"/><path d="M47.300 34l6.200 1.300.300 4.500-6.500 2.200z" fill="#2c2c2c"/><path d="M7.500 46c0-4 8-6 20-6s21 1.500 27 3.500l-.500 7c-5 6-14 9-25 9S8 56 7.500 50z" fill="#8e8e8e"/><path d="M8 38c0-3.500 9-5 20-5s19.500 1.500 19.500 5v6c0 3-9 5-19.500 5S8 47 8 44z" fill="#a8a8a8"/><path d="M9 42c4 3.500 30 4.500 38 0" fill="none" stroke="#cdcdcd" stroke-width="1"/><rect x="9" y="47.300" width="21" height="9" rx="4" fill="#3a3a3a"/><path d="M8.500 8c0-3 1.500-4.700 4.500-4.800h6V34H8.500z" fill="#bdbdbd"/><path d="M29.400 5l13.600 3c2.500.600 3.800 2.500 3.800 5V37c-4 2-12 2-17.400.500z" fill="url(#g-ptz)"/><path d="M31.500 5.300l11.500 2.700c2.500.600 3.800 2.500 3.800 5l-13.300-1.500z" fill="#9c9c9c"/><rect x="15" y="3.400" width="16.500" height="19" rx="2" fill="#e0e0e0"/><path d="M30.800 4.500l2.200 1-1.200 17h-1.800z" fill="#4a4a4a"/><rect x="15.200" y="22" width="14.400" height="13.400" fill="#060606"/><path d="M15.200 22h14.400v3.600l-14.400-1z" fill="#2c2c2c"/><circle cx="22" cy="12.300" r="5.900" fill="#b9b9b9"/><circle cx="22" cy="12.300" r="4.900" fill="#1e2a1e"/><circle cx="22" cy="12.800" r="2.700" fill="#4a6a3c"/><circle cx="21.300" cy="10.600" r="1.300" fill="#5a7a8a" opacity=".8"/></g></svg></div><div class="lab" style="left:-0.54px">Tracking<br>Camera</div></div>
<div class="tile" style="left:1117px;top:188px;height:159px"><div class="thumb"><svg class="ic" viewBox="0 0 62 62" width="62" height="62" preserveAspectRatio="none"><g clip-path="url(#c62)"><g filter="url(#f-b1)"><rect x="-2" y="-2" width="66" height="66" fill="#f4f2f4"/><rect x="-2" y="35.400" width="66" height="30" fill="url(#g-desk)"/><path d="M26.300 13.300l28.600-.4c3 .2 4.800 1.700 4.500 4l-3 15.800L51.500 58c-.4 1.600-1.600 2-3.500 1.600L21.500 54l-2-16 4.500-21z" fill="#1d1d20"/><path d="M27 14.500l27.500-.5 2 2.500-30 1z" fill="#4a4650"/><path d="M31.900 18.800l18.800-.4-.4 8.400-18.800.2z" fill="#0c0c0c"/><path d="M32.400 19.800l17.800-.3-.4 7-17.600.2z" fill="#b9c9b2"/><g fill="#4a4a4e"><rect x="32" y="28.500" width="2.600" height="1.200"/><rect x="36.500" y="28.800" width="2.600" height="1.200"/><rect x="41" y="29" width="2.600" height="1.200"/><rect x="45.500" y="29.200" width="2.600" height="1.200"/><circle cx="32" cy="36" r=".9"/><circle cx="37" cy="36.600" r=".9"/><circle cx="42" cy="37.200" r=".9"/><circle cx="31" cy="40" r=".9"/><circle cx="36" cy="40.700" r=".9"/><circle cx="41" cy="41.400" r=".9"/><circle cx="30" cy="44" r=".9"/><circle cx="35" cy="44.800" r=".9"/><circle cx="40" cy="45.600" r=".9"/><circle cx="29.500" cy="48" r=".9"/><circle cx="34.500" cy="48.800" r=".9"/><circle cx="39.500" cy="49.700" r=".9"/><circle cx="25" cy="38" r=".9"/><circle cx="24" cy="42" r=".9"/><circle cx="23.500" cy="46" r=".9"/><circle cx="47.500" cy="44" r=".8"/><circle cx="47" cy="49.500" r=".8"/></g><ellipse cx="51" cy="33.500" rx="3.500" ry="2.600" fill="#3a3a3e"/><path d="M15 2.600l10.700 1.100c1 .4 1.400 2 1.100 4.800L24 16.600 19.800 51 4.200 47.800l.5-7L10 11.200c1-5 2.500-8 5-8.600z" fill="#0e0e10"/><path d="M21 6c-4 10-7 26-8.500 40" stroke="#3a3a42" stroke-width="1.600" fill="none"/><rect x="5.500" y="46" width="5" height="1.600" fill="#777" transform="rotate(8 8 47)"/></g></g></svg></div><div class="lab" style="left:0.1px">Phone</div></div>
<div class="tile" style="left:1223px;top:188px;height:159px"><div class="thumb"><svg class="ic" viewBox="0 0 62 62" width="62" height="62" preserveAspectRatio="none"><rect width="62" height="62" fill="#fff"/><g filter="url(#f-b0)"><rect x="0" y="13.600" width="62" height="34.500" fill="#3a383a"/><path d="M22 13.600h40v5.100H24.500z" fill="#0f8a70"/><circle cx="20.400" cy="16.100" r="1.800" fill="#f4f4f4"/><rect x="33" y="15.400" width="23" height="1.500" fill="#6fc0ae"/><rect x="2.500" y="15.500" width="9" height="1.700" fill="#8a888a"/><g fill="#6f6d6f"><rect x="4" y="20.200" width="2.500" height=".8"/><rect x="17" y="20.200" width="8" height=".8"/><rect x="36" y="20.200" width="3.500" height=".8"/><rect x="48" y="20.200" width="5.500" height=".8"/><rect x="4" y="23.3" width="8" height=".9"/><rect x="17" y="23.3" width="17.5" height=".9"/><rect x="36" y="22.900000000000002" width="7" height="1.700"/><rect x="48" y="23.3" width="9" height=".9"/><rect x="4" y="28" width="8" height=".9"/><rect x="17" y="28" width="16.5" height=".9"/><rect x="36" y="27.6" width="7" height="1.700"/><rect x="48" y="28" width="6.5" height=".9"/><rect x="4" y="32.8" width="8" height=".9"/><rect x="17" y="32.8" width="15" height=".9"/><rect x="36" y="32.4" width="7" height="1.700"/><rect x="48" y="32.8" width="8" height=".9"/><rect x="4" y="37.6" width="8" height=".9"/><rect x="17" y="37.6" width="8" height=".9"/><rect x="36" y="37.2" width="7" height="1.700"/><rect x="48" y="37.6" width="6" height=".9"/><rect x="4" y="42.4" width="8" height=".9"/><rect x="17" y="42.4" width="16.5" height=".9"/><rect x="36" y="42.0" width="7" height="1.700"/><rect x="48" y="42.4" width="5.5" height=".9"/></g></g></svg></div><div class="lab" style="left:-0.26px">Reserva<br>Summary</div></div>
</div>
</div>
<div class="room" style="top:375px">
<div class="meta"><a class="rname lt" href="#">B1.77 <span class="np">(</span>LT3<span class="np">)</span></a><span class="tofu"></span><span class="capl lt">Capacity:</span><b class="capv">502</b><span class="yrl lt">Build Year:</span><b class="yrv">2019</b></div>
<div class="tiles">
<div class="tile" style="left:272px;top:15px;height:159px"><div class="thumb"><svg class="ic" viewBox="0 0 62 62" width="62" height="62" preserveAspectRatio="none"><rect width="62" height="62" fill="#0b0b0b"/><g filter="url(#f-b0)"><rect x="0" y="2.8" width="57.6" height="45" fill="#f3f4f4"/><rect x="10" y="3" width="38" height="6" fill="#8b8d8f"/><rect x="10" y="8.6" width="38" height="38.6" fill="url(#g-teal)"/><path d="M10 34c10-4 22-5 38-14v5C34 30 22 32 10 37z" fill="#a6d3da" opacity=".55"/><path d="M22 47c6-8 14-13 26-17v3C38 37 30 41 27 47z" fill="#b9dde2" opacity=".5"/><path d="M25 22c8 3 16 1 23-4v-4c-6 5-14 8-23 8z" fill="#2f93a8" opacity=".6"/><rect x="11" y="3.6" width="2" height="4.6" fill="#9a9a2a"/><rect x="15" y="3.6" width="2.6" height="4.6" fill="#c8404a"/><rect x="21" y="3.8" width="5.6" height="4.2" fill="#1818c4"/><rect x="29" y="3.6" width="7.5" height="4.8" fill="#e8eaf0"/><rect x="37" y="3.2" width="4.2" height="5.4" fill="#f2f030"/><rect x="42" y="4" width="5.5" height="4" fill="#9a9a9a"/><g fill="#a4a4a4"><rect x="1.5" y="5" width="2" height="2.5"/><rect x="1.5" y="11" width="2" height="2.5"/><rect x="1.5" y="17" width="2" height="2.5"/><rect x="1.5" y="23" width="2" height="2.5"/><rect x="1.5" y="29" width="2" height="2.5"/><rect x="49.5" y="5" width="1.6" height="2.5"/><rect x="49.5" y="11" width="1.6" height="2.5"/><rect x="49.5" y="17" width="1.6" height="2.5"/><rect x="49.5" y="23" width="1.6" height="2.5"/><rect x="49.5" y="29" width="1.2" height="2.5"/><rect x="49.5" y="35" width="1.2" height="2.5"/></g><rect x="0" y="46.8" width="57.6" height="11" fill="url(#g-dbar)"/><rect x="10" y="46.8" width="47.6" height="4" fill="#f0f0f0"/><rect x="10.5" y="47" width="20" height="3.8" fill="#dcdcdc"/><rect x="15" y="47" width="4" height="4" fill="#a4a030"/><rect x="58.4" y="45.5" width="2.6" height="4.5" fill="#c00a14"/></g></svg></div><div class="lab" style="left:-0.02px">DARCS / AMX<br>Room Control</div></div>
<div class="tile" style="left:378px;top:15px;height:159px"><div class="thumb"><svg class="ic" viewBox="0 0 62 62" width="62" height="62" preserveAspectRatio="none"><rect width="62" height="62" fill="#fff"/><circle cx="31" cy="31" r="20" fill="#4a8cff"/><rect x="17.3" y="24" width="18.8" height="14" rx="3.2" fill="#fff"/><path d="M37 31l6.4-6.8v13.6z" fill="#fff"/></svg></div><div class="lab" style="left:-0.38px">Zoom Capable</div></div>
<div class="tile" style="left:483px;top:15px;height:159px"><div class="thumb"><svg class="ic" viewBox="0 0 62 62" width="62" height="62" preserveAspectRatio="none"><rect width="62" height="62" fill="#fff"/><g filter="url(#f-b1)" transform="translate(.8 0)"><rect x="27.6" y="8.6" width="2.2" height="5" rx="1" fill="#222"/><rect x="15.3" y="13.4" width="27" height="2" fill="#c9c9c9"/><rect x="15.3" y="15" width="27" height="24.3" fill="#34221a"/><rect x="17.2" y="16.6" width="1.2" height="4.6" fill="#8a6a50"/><rect x="18.4" y="16.6" width="0.9" height="4.6" fill="#d8c8a8"/><rect x="19.3" y="16.6" width="0.9" height="4.6" fill="#d0b890"/><rect x="20.2" y="16.6" width="1.2" height="4.6" fill="#b89a70"/><rect x="21.4" y="16.6" width="0.9" height="4.6" fill="#8890a8"/><rect x="22.3" y="16.6" width="0.9" height="4.6" fill="#c8b8a0"/><rect x="23.2" y="16.6" width="1.2" height="4.6" fill="#7a5a48"/><rect x="24.4" y="16.6" width="0.9" height="4.6" fill="#5a4a40"/><rect x="25.3" y="16.6" width="0.9" height="4.6" fill="#a05040"/><rect x="26.2" y="16.6" width="0.8" height="4.6" fill="#b06a58"/><rect x="33.5" y="16.6" width="1.2" height="4.6" fill="#b89a70"/><rect x="34.7" y="16.6" width="0.9" height="4.6" fill="#8890a8"/><rect x="35.6" y="16.6" width="0.9" height="4.6" fill="#c8b8a0"/><rect x="36.5" y="16.6" width="1.2" height="4.6" fill="#7a5a48"/><rect x="37.7" y="16.6" width="0.9" height="4.6" fill="#5a4a40"/><rect x="38.6" y="16.6" width="0.9" height="4.6" fill="#a05040"/><rect x="39.5" y="16.6" width="1.2" height="4.6" fill="#b06a58"/><rect x="40.7" y="16.6" width="0.7" height="4.6" fill="#6a7890"/><rect x="17.2" y="23.6" width="0.9" height="8" fill="#c8b8a0"/><rect x="18.1" y="23.6" width="1.2" height="8" fill="#7a5a48"/><rect x="19.3" y="23.6" width="0.9" height="8" fill="#5a4a40"/><rect x="20.2" y="23.6" width="0.9" height="8" fill="#a05040"/><rect x="21.1" y="23.6" width="1.2" height="8" fill="#b06a58"/><rect x="22.3" y="23.6" width="0.9" height="8" fill="#6a7890"/><rect x="23.2" y="23.6" width="0.9" height="8" fill="#c0a860"/><rect x="24.1" y="23.6" width="1.2" height="8" fill="#8a6a50"/><rect x="25.3" y="23.6" width="0.2" height="8" fill="#d8c8a8"/><rect x="39.4" y="23.6" width="0.9" height="8" fill="#a05040"/><rect x="40.3" y="23.6" width="1.1" height="8" fill="#b06a58"/><rect x="17.2" y="34" width="0.9" height="5.2" fill="#6a7890"/><rect x="18.1" y="34" width="0.9" height="5.2" fill="#c0a860"/><rect x="19.0" y="34" width="1.2" height="5.2" fill="#8a6a50"/><rect x="20.2" y="34" width="0.9" height="5.2" fill="#d8c8a8"/><rect x="21.1" y="34" width="0.9" height="5.2" fill="#d0b890"/><rect x="22.0" y="34" width="1.2" height="5.2" fill="#b89a70"/><rect x="23.2" y="34" width="0.8" height="5.2" fill="#8890a8"/><rect x="36.5" y="34" width="0.9" height="5.2" fill="#c0a860"/><rect x="37.4" y="34" width="1.2" height="5.2" fill="#8a6a50"/><rect x="38.6" y="34" width="0.9" height="5.2" fill="#d8c8a8"/><rect x="39.5" y="34" width="0.9" height="5.2" fill="#d0b890"/><rect x="40.4" y="34" width="1.0" height="5.2" fill="#b89a70"/><rect x="34" y="23.6" width="2.2" height="8" fill="#e0a820"/><rect x="36.200" y="23.600" width="1.800" height="8" fill="#c83820"/><rect x="38" y="23.600" width="1.400" height="8" fill="#d8d0b0"/><rect x="37" y="34" width="3.500" height="5.200" fill="#d8c040"/><ellipse cx="28.6" cy="20.3" rx="2.5" ry="3.2" fill="#c8a088"/><path d="M26 18.200c.800-2.400 4.400-2.400 5.200 0l-.2 1h-4.800z" fill="#3a2a20"/><path d="M22.800 39.300c0-9 2-13.500 5.800-14.500 4 1 6.400 5.500 6.400 14.500z" fill="#171717"/><path d="M28 25.200l.700 4 .700-4z" fill="#ddd"/><rect x="29.800" y="36" width="2.600" height="2" fill="#c8c0b8"/><rect x="25.300" y="34.500" width="1.600" height="1.600" fill="#bbb"/><rect x="15.3" y="39.3" width="27" height="10.4" fill="#dcdcde"/><rect x="15.3" y="39.3" width="27" height="3" fill="#ececee"/><rect x="15.3" y="49.5" width="27" height="1.5" fill="#555"/><rect x="21" y="52" width="19" height="5" fill="#e3e3e3"/><path d="M22 53h17M22 54.500h17M22 56h17" stroke="#c8c8c8" stroke-width=".5"/><path d="M1.800 49.500l10.800-3.300 3.300 8.400-10.400 4.100z" fill="#55585a"/><path d="M4.700 50.200l7-2 2.200 5.600-6.600 2.600z" fill="#9aa3a8"/><path d="M40.700 51.500l12-.4 5.300 9.500-14 .6z" fill="#aaa9a4"/></g></svg></div><div class="lab" style="left:0.26px">Video<br>Conferencing</div></div>
<div class="tile" style="left:589px;top:15px;height:159px"><div class="thumb"><svg class="ic" viewBox="0 0 62 62" width="62" height="62" preserveAspectRatio="none"><rect width="62" height="62" fill="#fff"/><rect x="7" y="17.6" width="48.4" height="19.4" rx="9.7" fill="#32d45a"/><text x="31.200" y="29.500" font-family="Liberation Sans,sans-serif" font-size="5.8" text-anchor="middle" fill="#c4f4d0">Join</text></svg></div><div class="lab" style="left:-0.1px">Join button for<br>Zoom Meeting<br>(OBTP)</div></div>
<div class="tile" style="left:695px;top:15px;height:159px"><div class="thumb"><svg class="ic" viewBox="0 0 62 62" width="62" height="62" preserveAspectRatio="none"><rect width="62" height="62" fill="#f7f9fb"/><rect x="1" y=".5" width="59" height="60.500" rx="1" fill="#bdd8ef"/><g filter="url(#f-b0)"><path d="M21.700 17h6.800v28h-6.700M44 17.200h7.500v35.300h-4" fill="none" stroke="#5e8fc4" stroke-width=".9"/><rect x="8.5" y="12" width="13.200" height="9.700" rx=".8" fill="#303030"/><path d="M3 13.300l5.500 2.700v3l-5.500 2.600z" fill="#303030"/><circle cx="29.500" cy="7.300" r="3.700" fill="#2c2c2c"/><path d="M31.500 9.800l2.400-2.600 10.500 8.600-1.300 2.200z" fill="#2c2c2c"/><rect x="10.900" y="25.500" width="45.800" height="9.400" rx=".8" fill="#3a3a3e"/><rect x="10.900" y="25.500" width="6" height="9.400" fill="#121214"/><rect x="36" y="26.500" width="14" height="7" fill="#2a2a2c"/><rect x="54.800" y="27" width="1.200" height="6" fill="#b8b8b8"/><rect x="20" y="30.500" width="3" height="2" fill="#3f74c8"/><rect x="30.500" y="30.500" width="2.600" height="2" fill="#a89a3c"/><circle cx="13.800" cy="30.600" r="1.700" fill="none" stroke="#444" stroke-width=".5"/><rect x="3" y="41" width="18.800" height="7.700" rx="1.500" fill="#1e2428"/><rect x="4.800" y="48.500" width="2.600" height="1.300" fill="#1e2428"/><rect x="17" y="48.500" width="2.600" height="1.300" fill="#1e2428"/><circle cx="17.900" cy="44.800" r="2.800" fill="#d9dfe3"/><circle cx="17.900" cy="44.800" r="1.500" fill="#2a3036"/><rect x="5" y="42.800" width="3.600" height="4.200" fill="#8a99a4"/><path d="M38.100 46.600v12.600l6.300-4h3.100v-4.600h-3.100z" fill="#2e2e2e"/><path d="M35.200 47.800q-4.600 5 0 10.400M31.600 50.200q-3.200 3 0 6" fill="none" stroke="#2e2e2e" stroke-width="1.300" stroke-linecap="round"/></g></svg></div><div class="lab" style="left:-0.46px">PC AV<br>Integration</div></div>
<div class="tile" style="left:800px;top:15px;height:159px"><div class="thumb"><svg class="ic" viewBox="0 0 62 62" width="62" height="62" preserveAspectRatio="none"><rect width="62" height="62" fill="#fff"/><g filter="url(#f-b1)"><path d="M3.200 21l14-3.500 24-.8 16.500 4.500v3l-54 2z" fill="#f5f5f5"/><path d="M3.200 21.200l.8 13.500 10 6 18 2.800 22-1.500 3.400-8 .3-10.400-20 2.400z" fill="url(#g-proj)"/><path d="M3.200 21.200l.8 13.500 9 5.500-1.500-14z" fill="#d0d0d0"/><rect x="36.500" y="29" width="16" height="13" fill="#d3dce0"/><path d="M37 29.300h15.500" stroke="#8a949a" stroke-width=".5"/><g stroke="#e9eef0" stroke-width=".6"><path d="M39.500 30v12M42.500 30v12M45.500 30v12M48.500 30v12"/></g><ellipse cx="18.300" cy="33.800" rx="7.300" ry="8.400" fill="#8e8e8a"/><ellipse cx="18.800" cy="33.800" rx="5.700" ry="6.900" fill="#4a4846"/><ellipse cx="19.200" cy="33.700" rx="4.200" ry="5.200" fill="#2a2422"/><ellipse cx="19.300" cy="33.600" rx="2.800" ry="3.600" fill="#6e3832"/><rect x="34.200" y="42.200" width="6" height="2.300" rx=".8" fill="#333"/><g fill="#bbb"><circle cx="27" cy="26" r=".4"/><circle cx="29.500" cy="26.500" r=".4"/><circle cx="32" cy="27" r=".4"/><circle cx="34.300" cy="27.500" r=".4"/></g></g></svg></div><div class="lab" style="left:0.18px">Hi-res Projector<br>(2)</div></div>
<div class="tile" style="left:906px;top:15px;height:159px"><div class="thumb"><svg class="ic" viewBox="0 0 62 62" width="62" height="62" preserveAspectRatio="none"><rect width="62" height="62" fill="#fff"/><g filter="url(#f-b0)"><rect x="18.500" y="47.800" width="24.500" height="2.700" fill="#5a5c60"/><rect x="27" y="47.800" width="8" height="2.200" fill="#141416"/><rect x="1.900" y="13.100" width="57.600" height="35" rx="1" fill="#020203"/><rect x="3.600" y="14.600" width="54.400" height="31.600" fill="#0d0d11"/><path d="M3.600 14.600H28L10.500 46.200H3.600z" fill="url(#g-tv)"/></g></svg></div><div class="lab" style="left:-0.18px">LCD Touch<br>Display</div></div>
<div class="tile" style="left:1012px;top:15px;height:159px"><div class="thumb"><svg class="ic" viewBox="0 0 62 62" width="62" height="62" preserveAspectRatio="none"><rect width="62" height="62" fill="#fff"/><g filter="url(#f-b0)"><path d="M9.500 7.300h41.500l3.100 5h-48.200z" fill="#3c3f4b"/><rect x="5.900" y="12.300" width="48.200" height="15.400" rx=".6" fill="#1d2025"/><rect x="7" y="13.500" width="23" height="3.600" fill="#15171a"/><rect x="31" y="18.800" width="22" height="8" fill="#121316"/><rect x="24.500" y="17.200" width="4.600" height="2.300" fill="#4c6cb4"/><rect x="7.500" y="20.200" width="4.600" height="1.600" rx=".8" fill="#a01e22"/><rect x="45" y="13.800" width="7" height="1.200" fill="#6c6f78"/><rect x="17" y="14.300" width="1.700" height="1.700" fill="#8a8a8a"/><rect x="25.300" y="14.500" width="1.200" height="1.200" fill="#5a8a3a"/><rect x="17" y="24" width="1.600" height="2" fill="#777"/><rect x="19.800" y="24" width="1" height="2.200" fill="#b04a5a"/><path d="M1 40.500l6.400-8.300 42.100 8.700-4.400 12.700z" fill="#242424"/><path d="M4 40l4.500-5.600 38 8-3 8.500z" fill="#4c4c4c"/><g stroke="#1c1c1c" stroke-width=".7"><path d="M6.500 37l39.500 8.700M5.300 39l39.600 9.200M10 34.800l-4 5.500M15 36l-4 6M20 37l-3.500 6.500M25 38l-3 7M30 39l-3 7.600M35 40l-2.500 8M40 41l-2.500 8.600"/></g><ellipse cx="56.300" cy="47.400" rx="4.200" ry="5.700" transform="rotate(-28 56.300 47.400)" fill="#1c1c1c"/><path d="M52.500 41.500l-1.200-2.500" stroke="#333" stroke-width=".5"/></g></svg></div><div class="lab" style="left:-0.54px">Presentation PC<br>with DVD</div></div>
<div class="tile" style="left:1117px;top:15px;height:159px"><div class="thumb"><svg class="ic" viewBox="0 0 62 62" width="62" height="62" preserveAspectRatio="none"><g clip-path="url(#c62)"><g filter="url(#f-b2)"><rect x="-2" y="-2" width="66" height="66" fill="#e7e3e3"/><path d="M-2 -2h66v20L40 27 -2 50z" fill="#9a999a"/><path d="M-2 -2h26v8L-2 12z" fill="#b4b2b8"/><path d="M48 -2h16v20l-14 6z" fill="#b1aeba"/><path d="M50 18l14-3v12l-10 3z" fill="#e6e2e4"/><rect x="22" y="-2" width="9.500" height="11" fill="#b0b0b0"/><path d="M32 -2h17v14l-17-4z" fill="#1e1e1c"/><path d="M-2 6l8 1.500 16 10-8 5-16-8z" fill="#2c2c2c"/><path d="M-2 14l12 6-6 4-6-3z" fill="#333"/><ellipse cx="25" cy="12" rx="3.400" ry="1.600" fill="#a4d634"/><ellipse cx="31" cy="14.400" rx="3.600" ry="2" fill="#5b92ea"/><path d="M-2 35.500L51 16.500v1.800L-2 37.500z" fill="#dcdcdc"/><path d="M-2 37.500L51 18v5L40 27 -2 52z" fill="#171717"/><rect x="18" y="32" width="7" height="7" transform="rotate(-22 21 35)" fill="#3a3a3a"/><rect x="32.500" y="27" width="2.600" height="6.500" fill="#c4a43c"/><path d="M36 25.500l8-2.500 6 5 5 6.500 6 5 2 9-7 6-8-4-9-8.500-3.500-8z" fill="#2e2e30"/><path d="M46 46l13 12" stroke="#6f6b68" stroke-width="5.500"/><path d="M33 36l5 5-1.500 3-5.500-4z" fill="#8a6a38"/><ellipse cx="62" cy="48" rx="5" ry="14" fill="#8c5630"/><rect x="60" y="30" width="3" height="10" fill="#6a1410"/></g></g></svg></div><div class="lab" style="left:0.1px">Laptop<br>Connection<br>(HDMI)<br>(2)</div></div>
<div class="tile" style="left:1223px;top:15px;height:159px"><div class="thumb"><svg class="ic" viewBox="0 0 62 62" width="62" height="62" preserveAspectRatio="none"><rect width="62" height="62" fill="#fff"/><g filter="url(#f-b0)"><path d="M5.900 6.600l3.600 4.400" stroke="#6a6a6a" stroke-width="1.800" stroke-linecap="round"/><path d="M4.800 29.500L2.200 41.500" stroke="#7c7872" stroke-width="2.400"/><path d="M2.300 11.200l54.100-3.800 4.300 30.700-50 16.700z" fill="#0c0e14"/><path d="M4.500 12.800l50.600-3.500 3.700 27.500-46.500 15.500z" fill="url(#g-touch)"/></g></svg></div><div class="lab" style="left:-0.26px">Presenter&#39;s<br>Touch Monitor</div></div>
<div class="tile" style="left:1328px;top:15px;height:159px"><div class="thumb"><svg class="ic" viewBox="0 0 62 62" width="62" height="62" preserveAspectRatio="none"><rect width="62" height="62" fill="#fff"/><g filter="url(#f-b0)"><path d="M5 49c0-7 8-13.500 16.500-13 9 .5 15.500 9 15.500 16.500 0 6-8 8.500-16 7.500S5 55 5 49z" fill="#1a0a0a"/><path d="M5 48c0-7 8-13 16.500-12.500 9 .5 15.500 8.500 15.500 16 0 6-8 7.500-16 6.500S5 54 5 48z" fill="url(#g-red)"/><path d="M7 46c2-5 8-8 13-8" stroke="#e8484c" stroke-width="1.200" fill="none" opacity=".7"/><path d="M20.500 43C14 30 14.500 6 27 2.600c4-1 7 .4 9.500 2.400" fill="none" stroke="#141414" stroke-width="3.200" stroke-linecap="round"/><path d="M19 40c-.5-6 1-12.500 6-13.200" fill="none" stroke="#141414" stroke-width="1.500"/><ellipse cx="20" cy="41.500" rx="4.300" ry="2.500" transform="rotate(20 20 41.500)" fill="#120808"/><ellipse cx="46.700" cy="10.200" rx="11.800" ry="8.600" transform="rotate(12 46.700 10.200)" fill="#c0181e"/><ellipse cx="46.500" cy="9.300" rx="10" ry="6.600" transform="rotate(12 46.500 9.300)" fill="url(#g-redhead)"/><path d="M42 8.500l6-4" stroke="#a04040" stroke-width=".4"/><ellipse cx="31.600" cy="30.800" rx="8" ry="5.200" transform="rotate(14 31.600 30.800)" fill="#cc1c22"/><ellipse cx="32.500" cy="31.300" rx="4.500" ry="2.300" transform="rotate(14 32.500 31.300)" fill="#e47a78"/><circle cx="26.500" cy="48.300" r="3.700" fill="#a9a4a4"/><circle cx="26.500" cy="48.300" r="2.200" fill="#d8d4d4"/><path d="M24 48.300h5M26.500 45.800v5" stroke="#6a5a5a" stroke-width=".6"/></g></svg></div><div class="lab" style="left:0.38px">Document<br>Camera</div></div>
<div class="tile" style="left:1434px;top:15px;height:159px"><div class="thumb"><svg class="ic" viewBox="0 0 62 62" width="62" height="62" preserveAspectRatio="none"><rect width="62" height="62" fill="#fff"/><g filter="url(#f-b0)"><path d="M47 26l7 2.500c2.500 1 3.500 4 3.200 7.500l-1.600 10c-.6 3-2.400 4.400-5 4l-6.600-1.500z" fill="#2c3c64"/><path d="M50 30l4 1.500-1.500 15-4-1z" fill="#6a7a9c"/><ellipse cx="38.600" cy="33.400" rx="10.800" ry="23.600" transform="rotate(11 38.600 33.400)" fill="#3b4a72"/><ellipse cx="37.600" cy="33.500" rx="9.200" ry="21.400" transform="rotate(11 37.600 33.500)" fill="url(#g-cone)"/><ellipse cx="37.800" cy="33.500" rx="8.800" ry="20.500" transform="rotate(11 37.800 33.500)" fill="none" stroke="#d2404e" stroke-width="1"/><path d="M34 26l8 6M35 48l7-9" stroke="#e8eef0" stroke-width="1.100"/><ellipse cx="41.800" cy="33.800" rx="3.300" ry="6" transform="rotate(11 41.800 33.800)" fill="#e9eef1"/><path d="M46 20c3 6 3.600 22-1 33" stroke="#dfe5ea" stroke-width="1.600" fill="none"/><ellipse cx="43" cy="57.500" rx="10" ry="1.600" fill="#d8dce4" opacity=".6"/><path d="M15.500 5.400C8.500 12 6.600 22 8.300 30" fill="none" stroke="#7f8d96" stroke-width="3.200" stroke-linecap="round"/><path d="M15.500 5.400C8.500 12 6.600 22 8.300 30" fill="none" stroke="#dbe4ea" stroke-width="1.400" stroke-linecap="round"/><path d="M20.400 12.800C15.500 18 14.200 25 15.700 31" fill="none" stroke="#7f8d96" stroke-width="3" stroke-linecap="round"/><path d="M20.400 12.800C15.500 18 14.200 25 15.700 31" fill="none" stroke="#dbe4ea" stroke-width="1.300" stroke-linecap="round"/><path d="M25.400 21C22.800 24.500 22 28.500 23 32.200" fill="none" stroke="#7f8d96" stroke-width="2.900" stroke-linecap="round"/><path d="M25.400 21C22.800 24.500 22 28.500 23 32.200" fill="none" stroke="#cfd9df" stroke-width="1.200" stroke-linecap="round"/></g></svg></div><div class="lab" style="left:0.02px">Program Audio</div></div>
<div class="tile" style="left:272px;top:188px;height:159px"><div class="thumb"><svg class="ic" viewBox="0 0 62 62" width="62" height="62" preserveAspectRatio="none"><rect width="62" height="62" fill="#fff"/><path d="M8.800 10.200Q9 9.200 14 8.300C24 7.500 31 14 31.100 21L31 24.500l2.600 7Q33.800 33.500 31 33.600l-1.500.1-.5 3.100-3.500 1 3.500 3.400-1.500 4.600Q27 46.500 25 46.300l-5.500-.8v5.300H8.800z" fill="#000"/><g fill="none" stroke="#000" stroke-width="2.200" stroke-linecap="round"><path d="M37.800 24.600Q43.800 35 35.700 45.100"/><path d="M43.200 21.700Q51 36 40.300 49.100"/><path d="M48.600 18.500Q58.400 37 45.100 53.200"/></g></svg></div><div class="lab" style="left:-0.02px">Public Address</div></div>
<div class="tile" style="left:378px;top:188px;height:159px"><div class="thumb"><svg class="ic" viewBox="0 0 62 62" width="62" height="62" preserveAspectRatio="none"><rect width="62" height="62" fill="#fff"/><g filter="url(#f-b0)"><path d="M16 6.600C36 6.500 55 16 58.300 52" fill="none" stroke="#2a2c30" stroke-width="2.200"/><path d="M.4 4.200Q.4 2.700 2 2.700h8.500l6 2.300v3.400l-6 2.300H2Q.4 10.700.4 9.200z" fill="#101012"/><g fill="#8a8a8a"><rect x="2" y="5.500" width="1.600" height="1.200"/><rect x="4.800" y="5.500" width="1.600" height="1.200"/><rect x="7.600" y="5.500" width="1.600" height="1.200"/><rect x="10.200" y="5.500" width="1.200" height="1.200"/></g><rect x="57" y="48.500" width="3.200" height="6" fill="#1a1a1c"/><ellipse cx="59" cy="56.300" rx="2.600" ry="3.300" fill="#0c0c0e"/></g></svg></div><div class="lab" style="left:-0.38px">Presenter&#39;s<br>Desk<br>Microphone</div></div>
<div class="tile" style="left:483px;top:188px;height:159px"><div class="thumb"><svg class="ic" viewBox="0 0 62 62" width="62" height="62" preserveAspectRatio="none"><rect width="62" height="62" fill="#fff"/><g filter="url(#f-b0)"><path d="M32.800 1.600v32" stroke="#2c2c2c" stroke-width="1.300" stroke-linecap="round"/><rect x="31.900" y="27" width="1.900" height="6.500" fill="#2a2a2a"/><path d="M39 33.500V27C39 14 45.500 14 45.600 22l-.6 11.500" fill="none" stroke="#555" stroke-width=".7"/><rect x="43.900" y="20" width="1.800" height="13.500" rx=".8" fill="#2c2c2c"/><rect x="31.100" y="33" width="16.700" height="27.200" rx="1" fill="#303030"/><rect x="36.300" y="37" width="6.600" height="6.500" fill="#1a1a1a"/><rect x="37" y="38.400" width="5.200" height="3.400" fill="#7d9c3e"/><rect x="36" y="51.500" width="6" height="2.300" fill="#9a9a9a"/><circle cx="33.700" cy="44" r=".8" fill="#777"/><path d="M33.500 58h12" stroke="#6a6a6a" stroke-width=".5"/><path d="M47.800 48c4 1.500 6.500 5 7 8.500" fill="none" stroke="#444" stroke-width=".6"/><circle cx="51.600" cy="57.700" r="3.200" fill="#121212"/><rect x="7.200" y="49.700" width="15" height="10.800" rx=".8" fill="#333436"/><rect x="7.800" y="49.700" width="13.800" height="1.800" fill="#8a8c8e"/><rect x="11" y="54" width="8" height="4" fill="#1c2220"/><rect x="12.500" y="55" width="5" height="2" fill="#3c4a44"/></g></svg></div><div class="lab" style="left:0.26px">Lapel<br>Microphone</div></div>
<div class="tile" style="left:589px;top:188px;height:159px"><div class="thumb"><svg class="ic" viewBox="0 0 62 62" width="62" height="62" preserveAspectRatio="none"><rect width="62" height="62" fill="#fff"/><g filter="url(#f-b1)"><path d="M15.500 27.300L30 18.700l29.400 36.600c.6 1.400-1.500 3.600-4.400 4.600-2.500 1-4.300.8-5 .5z" fill="url(#g-mic)"/><path d="M22 27l28 32" stroke="#23212f" stroke-width="3" opacity=".7"/><ellipse cx="14.200" cy="11.700" rx="13.400" ry="10.700" transform="rotate(28 14.200 11.700)" fill="#16161c"/><path d="M8 21l8 7 14-9-5-9z" fill="#1c1c24"/><path d="M15.500 26.800L30 18.300" stroke="#4b49b6" stroke-width="1.500"/><path d="M14.500 24.500l14-8.500" stroke="#35344a" stroke-width="1.200"/><path d="M16 8l3.500-2M6.500 15.500l2.500-2" stroke="#5a5a6a" stroke-width="1" stroke-linecap="round"/><path d="M50.500 57l3-1.800M53.500 54.300l2-1.300" stroke="#6a6a78" stroke-width=".8"/></g></svg></div><div class="lab" style="left:-0.1px">Wireless<br>Handheld<br>Microphone</div></div>
<div class="tile" style="left:695px;top:188px;height:159px"><div class="thumb"><svg class="ic" viewBox="0 0 62 62" width="62" height="62" preserveAspectRatio="none"><rect width="62" height="62" fill="#0a0a96"/><path d="M51.600 0H62v9L49.200 20.900 42 10.600z" fill="#fff"/><path d="M0 52.300L14.800 38.100l10.600 6.600L9.500 62H0z" fill="#fff"/><path d="M11.800 25.500C13 8.500 46 8 46 28c0 9.500-6 12-9.500 17-3.500 5-3.300 9-7.500 12-3.500 2-7.500 1-9.300-1.700" fill="none" stroke="#fff" stroke-width="4"/><path d="M18.200 23.600C21 12.500 41 13.500 40.600 28c-.1 3.500-1.100 5.500-2.600 7.500" fill="none" stroke="#fff" stroke-width="3.6"/><text x="54.900" y="59.500" font-family="Liberation Sans,sans-serif" font-weight="bold" font-size="9" text-anchor="middle" fill="#fff">T</text></svg></div><div class="lab" style="left:-0.46px">Hearing Aid<br>Loop</div></div>
<div class="tile" style="left:800px;top:188px;height:159px"><div class="thumb"><svg class="ic" viewBox="0 0 62 62" width="62" height="62" preserveAspectRatio="none"><rect width="62" height="62" fill="#18188a"/><path d="M51.600 0H62v9L49.200 20.900 42 10.600z" fill="#fff"/><path d="M0 52.300L14.800 38.100l10.600 6.600L9.500 62H0z" fill="#fff"/><path d="M11.800 25.500C13 8.500 46 8 46 28c0 9.500-6 12-9.500 17-3.500 5-3.300 9-7.500 12-3.500 2-7.500 1-9.300-1.700" fill="none" stroke="#fff" stroke-width="2.8"/><path d="M18.200 23.600C21 12.500 41 13.500 40.600 28c-.1 3.500-1.100 5.500-2.600 7.500" fill="none" stroke="#fff" stroke-width="2.5"/></svg></div><div class="lab" style="left:0.18px">IR Hearing<br>Augmentation</div></div>
<div class="tile t5" style="left:906px;top:179px;height:178px"><div class="thumb"><svg class="ic" viewBox="0 0 62 62" width="62" height="62" preserveAspectRatio="none"><rect width="62" height="62" fill="#fff"/><g filter="url(#f-b0)"><g fill="#f29030"><circle cx="39.200" cy="7" r="1.500"/><circle cx="36" cy="10.600" r="1.500"/><circle cx="42.400" cy="10.600" r="1.500"/><circle cx="39.200" cy="14" r="1.500"/></g><text x="0" y="25.800" font-family="Liberation Sans,sans-serif" font-size="17.500" textLength="61" lengthAdjust="spacingAndGlyphs"><tspan fill="#2c6ea0">media</tspan><tspan fill="#3a3d6c">site</tspan></text><rect x="2.600" y="28.700" width="55.400" height="28.800" fill="#f40a0a"/><text x="30" y="39.700" font-family="Liberation Sans,sans-serif" font-weight="bold" font-size="11.600" text-anchor="middle" textLength="46.800" lengthAdjust="spacingAndGlyphs" fill="#fde8e8">RECORDING</text><text x="30.300" y="54.500" font-family="Liberation Sans,sans-serif" font-weight="bold" font-size="11.900" text-anchor="middle" textLength="53.300" lengthAdjust="spacingAndGlyphs" fill="#fde8e8">IN PROGRESS</text></g></svg></div><div class="lab" style="left:-0.18px">Mediasite<br>RL220<br>Hardware<br>Recorder<br>(2)</div></div>
<div class="tile" style="left:1012px;top:188px;height:159px"><div class="thumb"><svg class="ic" viewBox="0 0 62 62" width="62" height="62" preserveAspectRatio="none"><rect width="62" height="62" fill="#fff"/><g filter="url(#f-b1)"><path d="M47 33.500l7 1.500.500 14-6 8.500-3-1z" fill="#6c6c6c"/><path d="M47.300 34l6.200 1.300.300 4.500-6.500 2.200z" fill="#2c2c2c"/><path d="M7.500 46c0-4 8-6 20-6s21 1.500 27 3.500l-.500 7c-5 6-14 9-25 9S8 56 7.500 50z" fill="#8e8e8e"/><path d="M8 38c0-3.500 9-5 20-5s19.500 1.500 19.500 5v6c0 3-9 5-19.500 5S8 47 8 44z" fill="#a8a8a8"/><path d="M9 42c4 3.500 30 4.500 38 0" fill="none" stroke="#cdcdcd" stroke-width="1"/><rect x="9" y="47.300" width="21" height="9" rx="4" fill="#3a3a3a"/><path d="M8.500 8c0-3 1.500-4.700 4.500-4.800h6V34H8.500z" fill="#bdbdbd"/><path d="M29.400 5l13.600 3c2.500.600 3.800 2.500 3.800 5V37c-4 2-12 2-17.400.500z" fill="url(#g-ptz)"/><path d="M31.500 5.300l11.500 2.700c2.500.600 3.800 2.500 3.800 5l-13.300-1.500z" fill="#9c9c9c"/><rect x="15" y="3.400" width="16.500" height="19" rx="2" fill="#e0e0e0"/><path d="M30.800 4.500l2.200 1-1.200 17h-1.800z" fill="#4a4a4a"/><rect x="15.200" y="22" width="14.400" height="13.400" fill="#060606"/><path d="M15.200 22h14.400v3.600l-14.400-1z" fill="#2c2c2c"/><circle cx="22" cy="12.300" r="5.900" fill="#b9b9b9"/><circle cx="22" cy="12.300" r="4.900" fill="#1e2a1e"/><circle cx="22" cy="12.800" r="2.700" fill="#4a6a3c"/><circle cx="21.300" cy="10.600" r="1.300" fill="#5a7a8a" opacity=".8"/></g></svg></div><div class="lab" style="left:-0.54px">Tracking<br>Camera</div></div>
<div class="tile" style="left:1117px;top:188px;height:159px"><div class="thumb"><svg class="ic" viewBox="0 0 62 62" width="62" height="62" preserveAspectRatio="none"><g clip-path="url(#c62)"><g filter="url(#f-b1)"><rect x="-2" y="-2" width="66" height="66" fill="#f4f2f4"/><rect x="-2" y="35.400" width="66" height="30" fill="url(#g-desk)"/><path d="M26.300 13.300l28.600-.4c3 .2 4.800 1.700 4.500 4l-3 15.800L51.500 58c-.4 1.600-1.600 2-3.500 1.600L21.500 54l-2-16 4.500-21z" fill="#1d1d20"/><path d="M27 14.500l27.500-.5 2 2.500-30 1z" fill="#4a4650"/><path d="M31.900 18.800l18.800-.4-.4 8.400-18.800.2z" fill="#0c0c0c"/><path d="M32.400 19.800l17.800-.3-.4 7-17.600.2z" fill="#b9c9b2"/><g fill="#4a4a4e"><rect x="32" y="28.500" width="2.600" height="1.200"/><rect x="36.500" y="28.800" width="2.600" height="1.200"/><rect x="41" y="29" width="2.600" height="1.200"/><rect x="45.500" y="29.200" width="2.600" height="1.200"/><circle cx="32" cy="36" r=".9"/><circle cx="37" cy="36.600" r=".9"/><circle cx="42" cy="37.200" r=".9"/><circle cx="31" cy="40" r=".9"/><circle cx="36" cy="40.700" r=".9"/><circle cx="41" cy="41.400" r=".9"/><circle cx="30" cy="44" r=".9"/><circle cx="35" cy="44.800" r=".9"/><circle cx="40" cy="45.600" r=".9"/><circle cx="29.500" cy="48" r=".9"/><circle cx="34.500" cy="48.800" r=".9"/><circle cx="39.500" cy="49.700" r=".9"/><circle cx="25" cy="38" r=".9"/><circle cx="24" cy="42" r=".9"/><circle cx="23.500" cy="46" r=".9"/><circle cx="47.500" cy="44" r=".8"/><circle cx="47" cy="49.500" r=".8"/></g><ellipse cx="51" cy="33.500" rx="3.500" ry="2.600" fill="#3a3a3e"/><path d="M15 2.600l10.700 1.100c1 .4 1.400 2 1.100 4.800L24 16.600 19.800 51 4.200 47.800l.5-7L10 11.200c1-5 2.500-8 5-8.600z" fill="#0e0e10"/><path d="M21 6c-4 10-7 26-8.500 40" stroke="#3a3a42" stroke-width="1.600" fill="none"/><rect x="5.500" y="46" width="5" height="1.600" fill="#777" transform="rotate(8 8 47)"/></g></g></svg></div><div class="lab" style="left:0.1px">Phone</div></div>
<div class="tile" style="left:1223px;top:188px;height:159px"><div class="thumb"><svg class="ic" viewBox="0 0 62 62" width="62" height="62" preserveAspectRatio="none"><rect width="62" height="62" fill="#fff"/><g filter="url(#f-b0)"><rect x="0" y="13.600" width="62" height="34.500" fill="#3a383a"/><path d="M22 13.600h40v5.100H24.500z" fill="#0f8a70"/><circle cx="20.400" cy="16.100" r="1.800" fill="#f4f4f4"/><rect x="33" y="15.400" width="23" height="1.500" fill="#6fc0ae"/><rect x="2.500" y="15.500" width="9" height="1.700" fill="#8a888a"/><g fill="#6f6d6f"><rect x="4" y="20.200" width="2.500" height=".8"/><rect x="17" y="20.200" width="8" height=".8"/><rect x="36" y="20.200" width="3.500" height=".8"/><rect x="48" y="20.200" width="5.500" height=".8"/><rect x="4" y="23.3" width="8" height=".9"/><rect x="17" y="23.3" width="17.5" height=".9"/><rect x="36" y="22.900000000000002" width="7" height="1.700"/><rect x="48" y="23.3" width="9" height=".9"/><rect x="4" y="28" width="8" height=".9"/><rect x="17" y="28" width="16.5" height=".9"/><rect x="36" y="27.6" width="7" height="1.700"/><rect x="48" y="28" width="6.5" height=".9"/><rect x="4" y="32.8" width="8" height=".9"/><rect x="17" y="32.8" width="15" height=".9"/><rect x="36" y="32.4" width="7" height="1.700"/><rect x="48" y="32.8" width="8" height=".9"/><rect x="4" y="37.6" width="8" height=".9"/><rect x="17" y="37.6" width="8" height=".9"/><rect x="36" y="37.2" width="7" height="1.700"/><rect x="48" y="37.6" width="6" height=".9"/><rect x="4" y="42.4" width="8" height=".9"/><rect x="17" y="42.4" width="16.5" height=".9"/><rect x="36" y="42.0" width="7" height="1.700"/><rect x="48" y="42.4" width="5.5" height=".9"/></g></g></svg></div><div class="lab" style="left:-0.26px">Reserva<br>Summary</div></div>
<div class="tile" style="left:1328px;top:188px;height:159px"><div class="thumb"><svg class="ic" viewBox="0 0 62 62" width="62" height="62" preserveAspectRatio="none"><rect width="62" height="62" fill="url(#g-resbg)"/><g filter="url(#f-b1)"><ellipse cx="3" cy="31" rx="2.200" ry="10" fill="#e68a8a"/><ellipse cx="60" cy="29" rx="1.800" ry="10" fill="#e89a9a"/><path d="M4 12.500q0-2.100 2.100-2.100l51-.6q2.100 0 2.100 2.100v35.600q0 2-2 2.200L6.100 51.800q-2.100.2-2.100-2z" fill="#3c3c3f"/><path d="M4 12.500q0-2.100 2.100-2.100h1.200v41.300l-1.200.1q-2.100.2-2.100-2z" fill="#1e1e20"/><rect x="21.500" y="10.300" width="6" height="3.300" fill="#0e0e0e"/><path d="M30 47.200l6-.3v2.800l-6 .4z" fill="#0e0e0e"/><path d="M7.300 14.200h48.900v30.400L7.300 46.800z" fill="#e6e6e6"/><path d="M7.300 14.200h48.900v5.500H7.300z" fill="#f8f8f8"/><path d="M7.300 19.800l48.900-.8v13.500L7.300 33.700z" fill="url(#g-resred)"/><rect x="23.500" y="24.600" width="17" height="1.700" fill="#f3d4d4"/><rect x="30" y="21.300" width="5" height=".8" fill="#e09a9a"/><rect x="42" y="28.200" width="6.400" height="1.500" rx=".5" fill="#fff"/><rect x="50.500" y="28.200" width="3.500" height="1.500" fill="#c46a6a"/><rect x="50" y="19.800" width="4.500" height="1" fill="#f4e4e4"/><rect x="10.500" y="29.800" width="3.500" height="1.500" fill="#c06a6a"/><rect x="16" y="29.500" width="2.500" height="1.800" fill="#c87a7a"/><rect x="45" y="15.800" width="9" height="2.200" fill="#d8ccc0"/><rect x="10" y="16.600" width="4" height="1" fill="#aaa"/><rect x="7.300" y="35.800" width="9" height="2" fill="#8a8a8a"/><rect x="21" y="35" width="8" height=".8" fill="#c4c4c4"/><rect x="21" y="39" width="8" height="2.500" fill="#d4d4d4"/><rect x="49.500" y="37" width="3" height="3.600" fill="#5a5a5a"/><path d="M7.300 40.500l2.200 1-2.200 1.300z" fill="#333"/></g></svg></div><div class="lab" style="left:0.38px">Reserva</div></div>
</div>
</div>
<div class="room" style="top:750px">
<div class="meta"><a class="rname lt" href="#">B3.05 <span class="np">(</span>LT4<span class="np">)</span></a><span class="tofu"></span><span class="capl lt">Capacity:</span><b class="capv">101</b><span class="yrl lt">Build Year:</span><b class="yrv">2016</b></div>
<div class="tiles">
<div class="tile" style="left:272px;top:15px;height:159px"><div class="thumb"><svg class="ic" viewBox="0 0 62 62" width="62" height="62" preserveAspectRatio="none"><rect width="62" height="62" fill="#0b0b0b"/><g filter="url(#f-b0)"><rect x="0" y="2.8" width="57.6" height="45" fill="#f3f4f4"/><rect x="10" y="3" width="38" height="6" fill="#8b8d8f"/><rect x="10" y="8.6" width="38" height="38.6" fill="url(#g-teal)"/><path d="M10 34c10-4 22-5 38-14v5C34 30 22 32 10 37z" fill="#a6d3da" opacity=".55"/><path d="M22 47c6-8 14-13 26-17v3C38 37 30 41 27 47z" fill="#b9dde2" opacity=".5"/><path d="M25 22c8 3 16 1 23-4v-4c-6 5-14 8-23 8z" fill="#2f93a8" opacity=".6"/><rect x="11" y="3.6" width="2" height="4.6" fill="#9a9a2a"/><rect x="15" y="3.6" width="2.6" height="4.6" fill="#c8404a"/><rect x="21" y="3.8" width="5.6" height="4.2" fill="#1818c4"/><rect x="29" y="3.6" width="7.5" height="4.8" fill="#e8eaf0"/><rect x="37" y="3.2" width="4.2" height="5.4" fill="#f2f030"/><rect x="42" y="4" width="5.5" height="4" fill="#9a9a9a"/><g fill="#a4a4a4"><rect x="1.5" y="5" width="2" height="2.5"/><rect x="1.5" y="11" width="2" height="2.5"/><rect x="1.5" y="17" width="2" height="2.5"/><rect x="1.5" y="23" width="2" height="2.5"/><rect x="1.5" y="29" width="2" height="2.5"/><rect x="49.5" y="5" width="1.6" height="2.5"/><rect x="49.5" y="11" width="1.6" height="2.5"/><rect x="49.5" y="17" width="1.6" height="2.5"/><rect x="49.5" y="23" width="1.6" height="2.5"/><rect x="49.5" y="29" width="1.2" height="2.5"/><rect x="49.5" y="35" width="1.2" height="2.5"/></g><rect x="0" y="46.8" width="57.6" height="11" fill="url(#g-dbar)"/><rect x="10" y="46.8" width="47.6" height="4" fill="#f0f0f0"/><rect x="10.5" y="47" width="20" height="3.8" fill="#dcdcdc"/><rect x="15" y="47" width="4" height="4" fill="#a4a030"/><rect x="58.4" y="45.5" width="2.6" height="4.5" fill="#c00a14"/></g></svg></div><div class="lab" style="left:-0.02px">DARCS / AMX<br>Room Control</div></div>
<div class="tile" style="left:378px;top:15px;height:159px"><div class="thumb"><svg class="ic" viewBox="0 0 62 62" width="62" height="62" preserveAspectRatio="none"><rect width="62" height="62" fill="#fff"/><circle cx="31" cy="31" r="20" fill="#4a8cff"/><rect x="17.3" y="24" width="18.8" height="14" rx="3.2" fill="#fff"/><path d="M37 31l6.4-6.8v13.6z" fill="#fff"/></svg></div><div class="lab" style="left:-0.38px">Zoom Capable</div></div>
<div class="tile" style="left:483px;top:15px;height:159px"><div class="thumb"><svg class="ic" viewBox="0 0 62 62" width="62" height="62" preserveAspectRatio="none"><rect width="62" height="62" fill="#fff"/><g filter="url(#f-b1)" transform="translate(.8 0)"><rect x="27.6" y="8.6" width="2.2" height="5" rx="1" fill="#222"/><rect x="15.3" y="13.4" width="27" height="2" fill="#c9c9c9"/><rect x="15.3" y="15" width="27" height="24.3" fill="#34221a"/><rect x="17.2" y="16.6" width="1.2" height="4.6" fill="#8a6a50"/><rect x="18.4" y="16.6" width="0.9" height="4.6" fill="#d8c8a8"/><rect x="19.3" y="16.6" width="0.9" height="4.6" fill="#d0b890"/><rect x="20.2" y="16.6" width="1.2" height="4.6" fill="#b89a70"/><rect x="21.4" y="16.6" width="0.9" height="4.6" fill="#8890a8"/><rect x="22.3" y="16.6" width="0.9" height="4.6" fill="#c8b8a0"/><rect x="23.2" y="16.6" width="1.2" height="4.6" fill="#7a5a48"/><rect x="24.4" y="16.6" width="0.9" height="4.6" fill="#5a4a40"/><rect x="25.3" y="16.6" width="0.9" height="4.6" fill="#a05040"/><rect x="26.2" y="16.6" width="0.8" height="4.6" fill="#b06a58"/><rect x="33.5" y="16.6" width="1.2" height="4.6" fill="#b89a70"/><rect x="34.7" y="16.6" width="0.9" height="4.6" fill="#8890a8"/><rect x="35.6" y="16.6" width="0.9" height="4.6" fill="#c8b8a0"/><rect x="36.5" y="16.6" width="1.2" height="4.6" fill="#7a5a48"/><rect x="37.7" y="16.6" width="0.9" height="4.6" fill="#5a4a40"/><rect x="38.6" y="16.6" width="0.9" height="4.6" fill="#a05040"/><rect x="39.5" y="16.6" width="1.2" height="4.6" fill="#b06a58"/><rect x="40.7" y="16.6" width="0.7" height="4.6" fill="#6a7890"/><rect x="17.2" y="23.6" width="0.9" height="8" fill="#c8b8a0"/><rect x="18.1" y="23.6" width="1.2" height="8" fill="#7a5a48"/><rect x="19.3" y="23.6" width="0.9" height="8" fill="#5a4a40"/><rect x="20.2" y="23.6" width="0.9" height="8" fill="#a05040"/><rect x="21.1" y="23.6" width="1.2" height="8" fill="#b06a58"/><rect x="22.3" y="23.6" width="0.9" height="8" fill="#6a7890"/><rect x="23.2" y="23.6" width="0.9" height="8" fill="#c0a860"/><rect x="24.1" y="23.6" width="1.2" height="8" fill="#8a6a50"/><rect x="25.3" y="23.6" width="0.2" height="8" fill="#d8c8a8"/><rect x="39.4" y="23.6" width="0.9" height="8" fill="#a05040"/><rect x="40.3" y="23.6" width="1.1" height="8" fill="#b06a58"/><rect x="17.2" y="34" width="0.9" height="5.2" fill="#6a7890"/><rect x="18.1" y="34" width="0.9" height="5.2" fill="#c0a860"/><rect x="19.0" y="34" width="1.2" height="5.2" fill="#8a6a50"/><rect x="20.2" y="34" width="0.9" height="5.2" fill="#d8c8a8"/><rect x="21.1" y="34" width="0.9" height="5.2" fill="#d0b890"/><rect x="22.0" y="34" width="1.2" height="5.2" fill="#b89a70"/><rect x="23.2" y="34" width="0.8" height="5.2" fill="#8890a8"/><rect x="36.5" y="34" width="0.9" height="5.2" fill="#c0a860"/><rect x="37.4" y="34" width="1.2" height="5.2" fill="#8a6a50"/><rect x="38.6" y="34" width="0.9" height="5.2" fill="#d8c8a8"/><rect x="39.5" y="34" width="0.9" height="5.2" fill="#d0b890"/><rect x="40.4" y="34" width="1.0" height="5.2" fill="#b89a70"/><rect x="34" y="23.6" width="2.2" height="8" fill="#e0a820"/><rect x="36.200" y="23.600" width="1.800" height="8" fill="#c83820"/><rect x="38" y="23.600" width="1.400" height="8" fill="#d8d0b0"/><rect x="37" y="34" width="3.500" height="5.200" fill="#d8c040"/><ellipse cx="28.6" cy="20.3" rx="2.5" ry="3.2" fill="#c8a088"/><path d="M26 18.200c.800-2.400 4.400-2.400 5.200 0l-.2 1h-4.800z" fill="#3a2a20"/><path d="M22.800 39.300c0-9 2-13.500 5.800-14.500 4 1 6.400 5.500 6.400 14.500z" fill="#171717"/><path d="M28 25.200l.700 4 .700-4z" fill="#ddd"/><rect x="29.800" y="36" width="2.600" height="2" fill="#c8c0b8"/><rect x="25.300" y="34.500" width="1.600" height="1.600" fill="#bbb"/><rect x="15.3" y="39.3" width="27" height="10.4" fill="#dcdcde"/><rect x="15.3" y="39.3" width="27" height="3" fill="#ececee"/><rect x="15.3" y="49.5" width="27" height="1.5" fill="#555"/><rect x="21" y="52" width="19" height="5" fill="#e3e3e3"/><path d="M22 53h17M22 54.500h17M22 56h17" stroke="#c8c8c8" stroke-width=".5"/><path d="M1.800 49.500l10.800-3.300 3.300 8.400-10.400 4.100z" fill="#55585a"/><path d="M4.700 50.200l7-2 2.200 5.600-6.600 2.600z" fill="#9aa3a8"/><path d="M40.700 51.500l12-.4 5.300 9.500-14 .6z" fill="#aaa9a4"/></g></svg></div><div class="lab" style="left:0.26px">Video<br>Conferencing</div></div>
<div class="tile" style="left:589px;top:15px;height:159px"><div class="thumb"><svg class="ic" viewBox="0 0 62 62" width="62" height="62" preserveAspectRatio="none"><rect width="62" height="62" fill="#fff"/><rect x="7" y="17.6" width="48.4" height="19.4" rx="9.7" fill="#32d45a"/><text x="31.200" y="29.500" font-family="Liberation Sans,sans-serif" font-size="5.8" text-anchor="middle" fill="#c4f4d0">Join</text></svg></div><div class="lab" style="left:-0.1px">Join button for<br>Zoom Meeting<br>(OBTP)</div></div>
<div class="tile" style="left:695px;top:15px;height:159px"><div class="thumb"><svg class="ic" viewBox="0 0 62 62" width="62" height="62" preserveAspectRatio="none"><rect width="62" height="62" fill="#f7f9fb"/><rect x="1" y=".5" width="59" height="60.500" rx="1" fill="#bdd8ef"/><g filter="url(#f-b0)"><path d="M21.700 17h6.800v28h-6.700M44 17.200h7.500v35.300h-4" fill="none" stroke="#5e8fc4" stroke-width=".9"/><rect x="8.5" y="12" width="13.200" height="9.700" rx=".8" fill="#303030"/><path d="M3 13.300l5.500 2.700v3l-5.500 2.600z" fill="#303030"/><circle cx="29.500" cy="7.300" r="3.700" fill="#2c2c2c"/><path d="M31.500 9.800l2.400-2.600 10.500 8.600-1.300 2.200z" fill="#2c2c2c"/><rect x="10.900" y="25.500" width="45.800" height="9.400" rx=".8" fill="#3a3a3e"/><rect x="10.900" y="25.500" width="6" height="9.400" fill="#121214"/><rect x="36" y="26.500" width="14" height="7" fill="#2a2a2c"/><rect x="54.800" y="27" width="1.200" height="6" fill="#b8b8b8"/><rect x="20" y="30.500" width="3" height="2" fill="#3f74c8"/><rect x="30.500" y="30.500" width="2.600" height="2" fill="#a89a3c"/><circle cx="13.800" cy="30.600" r="1.700" fill="none" stroke="#444" stroke-width=".5"/><rect x="3" y="41" width="18.800" height="7.700" rx="1.500" fill="#1e2428"/><rect x="4.800" y="48.500" width="2.600" height="1.300" fill="#1e2428"/><rect x="17" y="48.500" width="2.600" height="1.300" fill="#1e2428"/><circle cx="17.900" cy="44.800" r="2.800" fill="#d9dfe3"/><circle cx="17.900" cy="44.800" r="1.500" fill="#2a3036"/><rect x="5" y="42.800" width="3.600" height="4.200" fill="#8a99a4"/><path d="M38.100 46.600v12.600l6.300-4h3.100v-4.600h-3.100z" fill="#2e2e2e"/><path d="M35.200 47.800q-4.600 5 0 10.400M31.600 50.200q-3.200 3 0 6" fill="none" stroke="#2e2e2e" stroke-width="1.300" stroke-linecap="round"/></g></svg></div><div class="lab" style="left:-0.46px">PC AV<br>Integration</div></div>
<div class="tile" style="left:800px;top:15px;height:159px"><div class="thumb"><svg class="ic" viewBox="0 0 62 62" width="62" height="62" preserveAspectRatio="none"><rect width="62" height="62" fill="#fff"/><g filter="url(#f-b1)"><path d="M3.200 21l14-3.500 24-.8 16.500 4.500v3l-54 2z" fill="#f5f5f5"/><path d="M3.200 21.200l.8 13.500 10 6 18 2.800 22-1.500 3.400-8 .3-10.400-20 2.400z" fill="url(#g-proj)"/><path d="M3.200 21.200l.8 13.500 9 5.500-1.500-14z" fill="#d0d0d0"/><rect x="36.500" y="29" width="16" height="13" fill="#d3dce0"/><path d="M37 29.300h15.500" stroke="#8a949a" stroke-width=".5"/><g stroke="#e9eef0" stroke-width=".6"><path d="M39.500 30v12M42.500 30v12M45.500 30v12M48.500 30v12"/></g><ellipse cx="18.300" cy="33.800" rx="7.300" ry="8.400" fill="#8e8e8a"/><ellipse cx="18.800" cy="33.800" rx="5.700" ry="6.900" fill="#4a4846"/><ellipse cx="19.200" cy="33.700" rx="4.200" ry="5.200" fill="#2a2422"/><ellipse cx="19.300" cy="33.600" rx="2.800" ry="3.600" fill="#6e3832"/><rect x="34.200" y="42.200" width="6" height="2.300" rx=".8" fill="#333"/><g fill="#bbb"><circle cx="27" cy="26" r=".4"/><circle cx="29.500" cy="26.500" r=".4"/><circle cx="32" cy="27" r=".4"/><circle cx="34.300" cy="27.500" r=".4"/></g></g></svg></div><div class="lab" style="left:0.18px">Hi-res Projector<br>(2)</div></div>
<div class="tile" style="left:906px;top:15px;height:159px"><div class="thumb"><svg class="ic" viewBox="0 0 62 62" width="62" height="62" preserveAspectRatio="none"><rect width="62" height="62" fill="#fff"/><g filter="url(#f-b0)"><path d="M9.500 7.300h41.500l3.100 5h-48.200z" fill="#3c3f4b"/><rect x="5.900" y="12.300" width="48.200" height="15.400" rx=".6" fill="#1d2025"/><rect x="7" y="13.500" width="23" height="3.600" fill="#15171a"/><rect x="31" y="18.800" width="22" height="8" fill="#121316"/><rect x="24.500" y="17.200" width="4.600" height="2.300" fill="#4c6cb4"/><rect x="7.500" y="20.200" width="4.600" height="1.600" rx=".8" fill="#a01e22"/><rect x="45" y="13.800" width="7" height="1.200" fill="#6c6f78"/><rect x="17" y="14.300" width="1.700" height="1.700" fill="#8a8a8a"/><rect x="25.300" y="14.500" width="1.200" height="1.200" fill="#5a8a3a"/><rect x="17" y="24" width="1.600" height="2" fill="#777"/><rect x="19.800" y="24" width="1" height="2.200" fill="#b04a5a"/><path d="M1 40.500l6.400-8.300 42.100 8.700-4.400 12.700z" fill="#242424"/><path d="M4 40l4.500-5.600 38 8-3 8.500z" fill="#4c4c4c"/><g stroke="#1c1c1c" stroke-width=".7"><path d="M6.500 37l39.500 8.700M5.300 39l39.600 9.200M10 34.800l-4 5.500M15 36l-4 6M20 37l-3.500 6.500M25 38l-3 7M30 39l-3 7.600M35 40l-2.500 8M40 41l-2.500 8.600"/></g><ellipse cx="56.300" cy="47.400" rx="4.200" ry="5.700" transform="rotate(-28 56.300 47.400)" fill="#1c1c1c"/><path d="M52.500 41.500l-1.200-2.500" stroke="#333" stroke-width=".5"/></g></svg></div><div class="lab" style="left:-0.18px">Presentation PC<br>with DVD</div></div>
<div class="tile" style="left:1012px;top:15px;height:159px"><div class="thumb"><svg class="ic" viewBox="0 0 62 62" width="62" height="62" preserveAspectRatio="none"><g clip-path="url(#c62)"><g filter="url(#f-b2)"><rect x="-2" y="-2" width="66" height="66" fill="url(#g-table)"/><path d="M-2 -2h52l2 8L-2 21z" fill="url(#g-sky)"/><path d="M50 -2h14v24l-8 8-6-8z" fill="#9aa0b0"/><path d="M50 -2h14v6l-13 2z" fill="#5c6068"/><path d="M-2 20L51 4l1 6L-2 33z" fill="#aca796"/><path d="M-2 32L52 9l.5 2.500L-2 36z" fill="#dedcc0"/><path d="M-2 36L52 11.500v9L36 29 18 38-2 50z" fill="#2c2c26"/><rect x="18" y="25" width="6" height="7" transform="rotate(-24 21 28)" fill="#3b5fa4"/><rect x="-1" y="35" width="8" height="8.500" transform="rotate(-24 3 39)" fill="#c4ac62"/><rect x="9" y="33" width="2" height="7" transform="rotate(-24 10 36)" fill="#b8a070"/><rect x="15.500" y="30" width="1.600" height="7" transform="rotate(-24 16 33)" fill="#a89070"/><path d="M24 26l9-5 8 4 4 8 6 2-1 8-8 3-10-4z" fill="#1c1c1e"/><rect x="31.500" y="24" width="3" height="9" fill="#d8d0b8"/><rect x="34.500" y="22" width="4" height="18" fill="#4a5058"/><rect x="41" y="35" width="4" height="4" fill="#d8cca8"/><rect x="49" y="31" width="3" height="8" fill="#7a4828"/><ellipse cx="58.500" cy="24" rx="6" ry="13" transform="rotate(18 58.500 24)" fill="#f2b6ba"/><ellipse cx="59.500" cy="34" rx="7" ry="6" fill="#f4dcdc"/></g></g></svg></div><div class="lab" style="left:-0.54px">Laptop<br>Connection<br>(VGA)<br>(2)</div></div>
<div class="tile" style="left:1117px;top:15px;height:159px"><div class="thumb"><svg class="ic" viewBox="0 0 62 62" width="62" height="62" preserveAspectRatio="none"><g clip-path="url(#c62)"><g filter="url(#f-b2)"><rect x="-2" y="-2" width="66" height="66" fill="#e7e3e3"/><path d="M-2 -2h66v20L40 27 -2 50z" fill="#9a999a"/><path d="M-2 -2h26v8L-2 12z" fill="#b4b2b8"/><path d="M48 -2h16v20l-14 6z" fill="#b1aeba"/><path d="M50 18l14-3v12l-10 3z" fill="#e6e2e4"/><rect x="22" y="-2" width="9.500" height="11" fill="#b0b0b0"/><path d="M32 -2h17v14l-17-4z" fill="#1e1e1c"/><path d="M-2 6l8 1.500 16 10-8 5-16-8z" fill="#2c2c2c"/><path d="M-2 14l12 6-6 4-6-3z" fill="#333"/><ellipse cx="25" cy="12" rx="3.400" ry="1.600" fill="#a4d634"/><ellipse cx="31" cy="14.400" rx="3.600" ry="2" fill="#5b92ea"/><path d="M-2 35.500L51 16.500v1.800L-2 37.500z" fill="#dcdcdc"/><path d="M-2 37.500L51 18v5L40 27 -2 52z" fill="#171717"/><rect x="18" y="32" width="7" height="7" transform="rotate(-22 21 35)" fill="#3a3a3a"/><rect x="32.500" y="27" width="2.600" height="6.500" fill="#c4a43c"/><path d="M36 25.500l8-2.500 6 5 5 6.500 6 5 2 9-7 6-8-4-9-8.500-3.500-8z" fill="#2e2e30"/><path d="M46 46l13 12" stroke="#6f6b68" stroke-width="5.500"/><path d="M33 36l5 5-1.500 3-5.500-4z" fill="#8a6a38"/><ellipse cx="62" cy="48" rx="5" ry="14" fill="#8c5630"/><rect x="60" y="30" width="3" height="10" fill="#6a1410"/></g></g></svg></div><div class="lab" style="left:0.1px">Laptop<br>Connection<br>(HDMI)<br>(2)</div></div>
<div class="tile" style="left:1223px;top:15px;height:159px"><div class="thumb"><svg class="ic" viewBox="0 0 62 62" width="62" height="62" preserveAspectRatio="none"><rect width="62" height="62" fill="#fff"/><g filter="url(#f-b1)"><rect x="29.200" y="46.500" width="4.300" height="7" fill="#9a9a9a"/><rect x="18.700" y="51.800" width="24.400" height="1.800" fill="#b4b4b4"/><rect x="29" y="50.800" width="4.600" height="3" fill="#7e7e7e"/><path d="M9.800 10.700h42.400l.5 36.300H9.300z" fill="#b5b5b5"/><path d="M12.400 13.900h37.500l.3 29.100H12z" fill="#060606"/></g></svg></div><div class="lab" style="left:-0.26px">LCD Monitor</div></div>
<div class="tile" style="left:1328px;top:15px;height:159px"><div class="thumb"><svg class="ic" viewBox="0 0 62 62" width="62" height="62" preserveAspectRatio="none"><rect width="62" height="62" fill="#fff"/><g filter="url(#f-b0)"><rect x="10.300" y="26" width="2.300" height="27" fill="#9c9c9c"/><rect x="50.300" y="27" width="2.300" height="28.500" fill="#9a9a98"/><path d="M15 52.200l36 3" stroke="#bcbcbc" stroke-width="1.200"/><path d="M5 56.600l10.500-5" stroke="#8c8c8c" stroke-width="1.700" stroke-linecap="round"/><path d="M48.500 59l5.500-5.500" stroke="#7c7c7c" stroke-width="1.700" stroke-linecap="round"/><path d="M7.400 3.200h49.200l-.2 24.200-49.400-1.200z" fill="url(#g-wb)"/><path d="M7.400 3.300h49.200" stroke="#b4b8ba" stroke-width=".8"/><path d="M7 26.400l49.400 1.200" stroke="#d8dcde" stroke-width=".6"/><rect x="7" y="2.800" width="2" height="1.200" fill="#666"/><rect x="54.500" y="3" width="2.200" height="1.300" fill="#777"/><rect x="54" y="26.800" width="2.500" height="1.200" fill="#777"/><rect x="6.800" y="25.500" width="2" height="1" fill="#999"/></g></svg></div><div class="lab" style="left:0.38px">Whiteboard</div></div>
<div class="tile" style="left:1434px;top:15px;height:159px"><div class="thumb"><svg class="ic" viewBox="0 0 62 62" width="62" height="62" preserveAspectRatio="none"><rect width="62" height="62" fill="#fff"/><g filter="url(#f-b0)"><path d="M5 49c0-7 8-13.500 16.500-13 9 .5 15.500 9 15.500 16.500 0 6-8 8.500-16 7.500S5 55 5 49z" fill="#1a0a0a"/><path d="M5 48c0-7 8-13 16.500-12.500 9 .5 15.500 8.500 15.500 16 0 6-8 7.500-16 6.500S5 54 5 48z" fill="url(#g-red)"/><path d="M7 46c2-5 8-8 13-8" stroke="#e8484c" stroke-width="1.200" fill="none" opacity=".7"/><path d="M20.500 43C14 30 14.500 6 27 2.600c4-1 7 .4 9.500 2.400" fill="none" stroke="#141414" stroke-width="3.200" stroke-linecap="round"/><path d="M19 40c-.5-6 1-12.500 6-13.200" fill="none" stroke="#141414" stroke-width="1.500"/><ellipse cx="20" cy="41.500" rx="4.300" ry="2.500" transform="rotate(20 20 41.500)" fill="#120808"/><ellipse cx="46.700" cy="10.200" rx="11.800" ry="8.600" transform="rotate(12 46.700 10.200)" fill="#c0181e"/><ellipse cx="46.500" cy="9.300" rx="10" ry="6.600" transform="rotate(12 46.500 9.300)" fill="url(#g-redhead)"/><path d="M42 8.500l6-4" stroke="#a04040" stroke-width=".4"/><ellipse cx="31.600" cy="30.800" rx="8" ry="5.200" transform="rotate(14 31.600 30.800)" fill="#cc1c22"/><ellipse cx="32.500" cy="31.300" rx="4.500" ry="2.300" transform="rotate(14 32.500 31.300)" fill="#e47a78"/><circle cx="26.500" cy="48.300" r="3.700" fill="#a9a4a4"/><circle cx="26.500" cy="48.300" r="2.200" fill="#d8d4d4"/><path d="M24 48.300h5M26.500 45.800v5" stroke="#6a5a5a" stroke-width=".6"/></g></svg></div><div class="lab" style="left:0.02px">Document<br>Camera</div></div>
</div>
</div>

  </div>
</div>
</div>
</body>
</html>
